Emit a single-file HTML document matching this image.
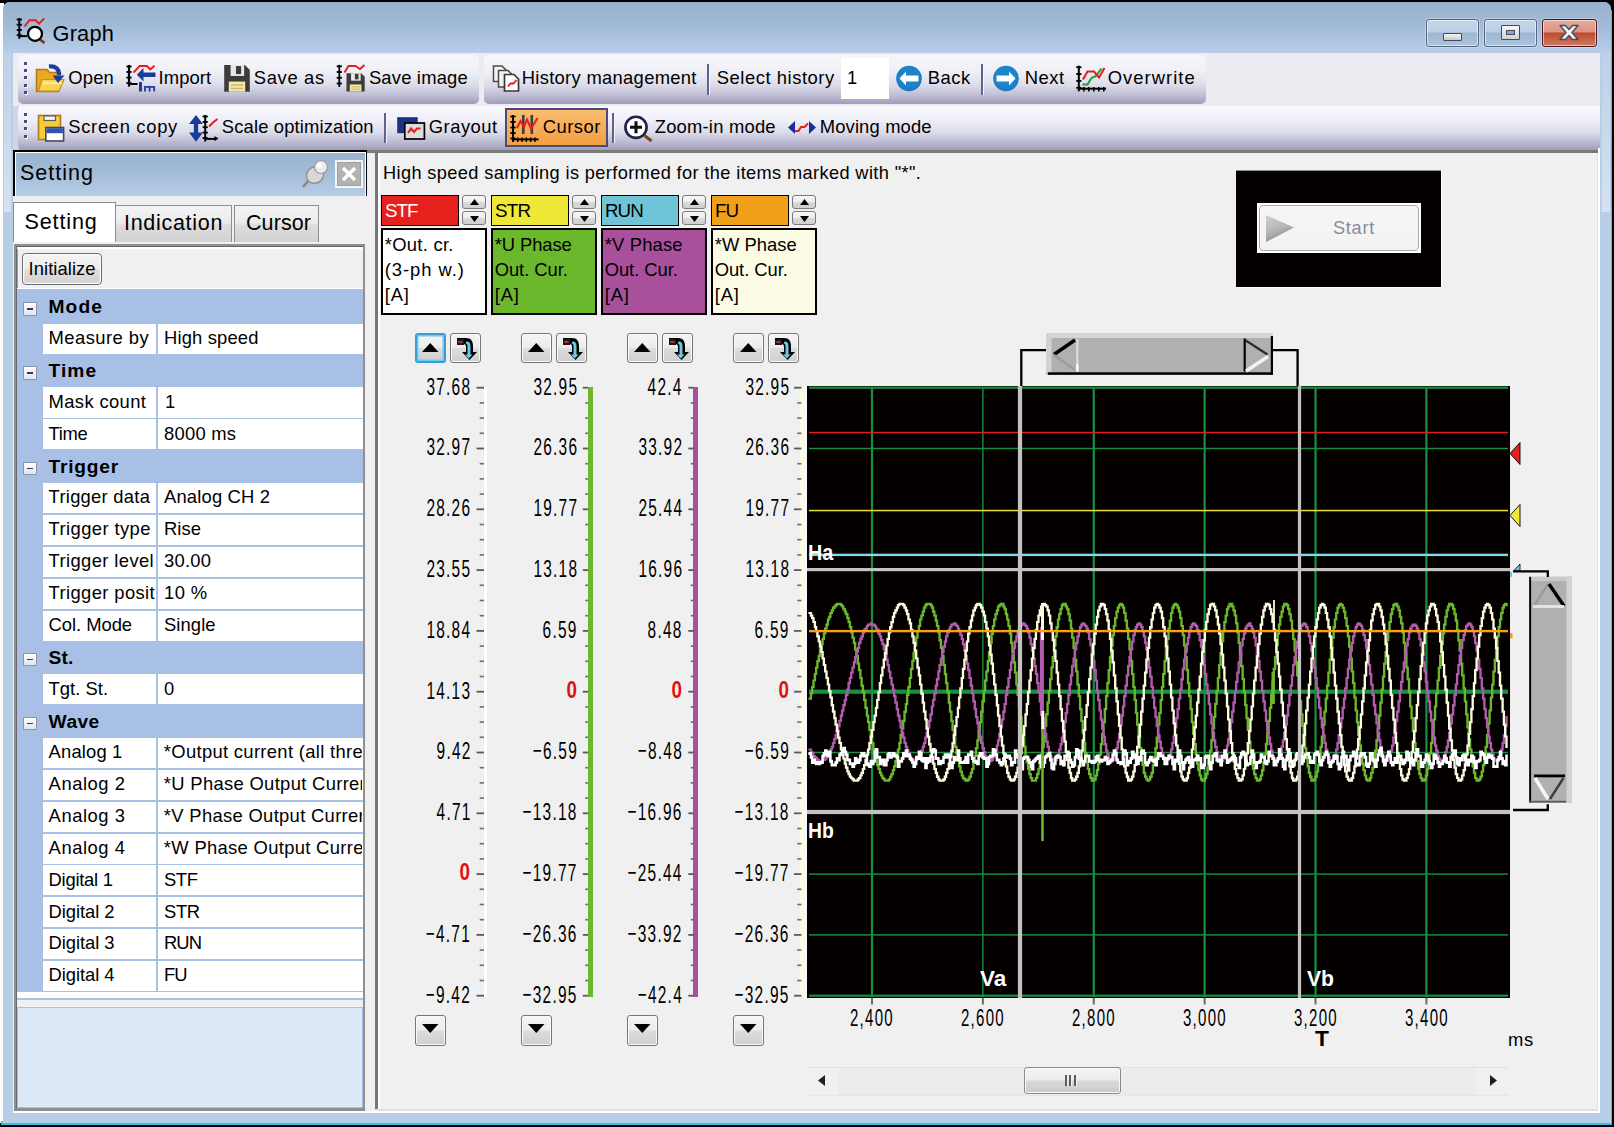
<!DOCTYPE html><html><head><meta charset="utf-8"><title>Graph</title><style>
*{box-sizing:border-box;margin:0;padding:0}
html,body{width:1614px;height:1127px;overflow:hidden;background:#000}
body{font-family:"Liberation Sans",sans-serif;color:#000;position:relative}
.a{position:absolute}
.t{position:absolute;white-space:nowrap;line-height:1}
svg{position:absolute;overflow:visible}
#win{position:absolute;left:3px;top:2px;width:1608px;height:1121px;background:#b8cde6;border-radius:7px 7px 0 0}
#title{position:absolute;left:3px;top:2px;width:1608px;height:51px;border-radius:7px 7px 0 0;background:linear-gradient(#97b1ce 0,#a1bad6 45%,#b7cee8 100%)}
.cap{position:absolute;top:19px;height:28px;border:1px solid #54667f;border-radius:3px;background:linear-gradient(#c3d4e7 0,#bccfe4 46%,#9db5d0 50%,#aec5df 100%);box-shadow:inset 0 0 0 1px rgba(255,255,255,.55),0 0 0 1px rgba(255,255,255,.3)}
.cap.x{background:linear-gradient(#e6ab9e 0,#dc9384 46%,#bd4a30 50%,#cf7a62 100%);border-color:#4a1520}
.tb{position:absolute;border-radius:5px;background:linear-gradient(#f6f6fb 0,#efeff6 35%,#dedeeb 60%,#b9b8d0 86%,#9e9cba 100%)}
.tt{position:absolute;white-space:nowrap;font-size:18.4px;line-height:20px;color:#000}
.grip{position:absolute;width:3px;height:32px;background:repeating-linear-gradient(#4b4b7a 0,#4b4b7a 3px,transparent 3px,transparent 7.200px)}
.grip.w{background:repeating-linear-gradient(#fff 0,#fff 3px,transparent 3px,transparent 7.200px)}
.sep{position:absolute;width:3px;background:linear-gradient(90deg,#62628e 0,#62628e 60%,#f4f4fa 60%)}

.tab{position:absolute;border:1.5px solid #8e8e8e;border-bottom:none;background:linear-gradient(#f3f3f3 0,#ececec 45%,#dcdcdc 55%,#d2d2d2 100%)}
.gh{position:absolute;left:17px;width:346px;background:#a9c0e6}
.gc{position:absolute;background:#fff}
.pm{position:absolute;left:23px;width:13.500px;height:13.500px;border:1px solid #8a95a8;background:linear-gradient(#fff,#dfe4ee);border-radius:1px}
.pm:after{content:"";position:absolute;left:2.500px;top:5px;width:6.500px;height:1.500px;background:#2a3a66}

.cb{position:absolute;top:195px;width:78px;height:31px;border:1.5px solid #000}
.db{position:absolute;top:228px;width:106px;height:87px;border:2px solid #000}
.sp{position:absolute;width:24px;height:14px;border:1.5px solid #7a7a7a;border-radius:3px;background:linear-gradient(#f6f6f6 0,#ededed 50%,#d8d8d8 55%,#d0d0d0 100%)}
.bt{position:absolute;width:31px;height:30px;border:1.5px solid #767676;border-radius:3px;background:linear-gradient(#f5f5f5 0,#ececec 48%,#dcdcdc 52%,#cfcfcf 100%);box-shadow:inset 0 0 0 1px #fafafa}
.bt.sel{border:2px solid #3a9cd8;box-shadow:inset 0 0 0 1.500px #6ccaf0}

.ax{position:absolute;white-space:nowrap;font-size:24.500px;line-height:1;transform-origin:100% 50%;transform:scaleX(.63);text-align:right;letter-spacing:2px}
.ax.z{transform:scaleX(.8);letter-spacing:0;font-size:23.500px;margin-right:1px}
.xl{position:absolute;white-space:nowrap;font-size:23.500px;line-height:1;transform-origin:50% 50%;transform:scaleX(.64);text-align:center;width:100px;letter-spacing:2px}
.cl{position:absolute;white-space:nowrap;font-size:18.500px;line-height:1;font-weight:bold;color:#fff;transform-origin:0 50%;transform:scaleX(.95)}
</style></head><body><div class="a" style="left:0;top:3px;width:4px;height:1120px;background:#fff"></div><div class="a" style="left:1px;top:1121px;width:1611px;height:4px;background:#3cc0dc"></div><div class="a" style="left:1609px;top:10px;width:3px;height:1114px;background:#3cc0dc"></div><div id="win"></div><div id="title"></div><div class="a" style="left:4px;top:53px;width:7px;height:159px;background:linear-gradient(rgba(255,255,255,.08),rgba(255,255,255,.42))"></div><div class="a" style="left:1601.500px;top:53px;width:8px;height:159px;background:linear-gradient(rgba(255,255,255,.08),rgba(255,255,255,.42))"></div><div class="t" style="left:52.5px;top:22.5px;font-size:21.8px;letter-spacing:0.18px;color:#000;">Graph</div><div class="cap" style="left:1426px;width:53px"></div><div class="cap" style="left:1484px;width:53px"></div><div class="cap x" style="left:1542px;width:55px"></div><div class="a" style="left:1443px;top:33px;width:19px;height:8px;background:linear-gradient(#f4f4f4,#c8c8c8);border:1.5px solid #454b5e;border-radius:1px"></div><div class="a" style="left:1501px;top:25px;width:19px;height:15px;background:linear-gradient(#f8f8f8,#d0d0d0);border:1.5px solid #454b5e;border-radius:1px"></div><div class="a" style="left:1506px;top:30px;width:9px;height:5px;background:#8aa4c4;border:1.5px solid #454b5e"></div><svg style="left:1558px;top:24px" width="22" height="17" viewBox="0 0 22 17"><path d="M2 1.5h5.5l3.5 4 3.5-4H20l-6 7 6 7h-5.500l-3.500-4-3.500 4H2l6-7z" fill="#f2f2f2" stroke="#454b5e" stroke-width="1.4" stroke-linejoin="round"/></svg><div class="a" style="left:13px;top:52.600px;width:1587px;height:53.400px;background:#ecebf1"></div><div class="a" style="left:13px;top:106px;width:1587px;height:44px;background:linear-gradient(#f8f8fc 0,#f0f0f8 30%,#dcdcea 60%,#b6b5ce 86%,#9f9dba 100%)"></div><div class="a" style="left:13px;top:150px;width:1587px;height:3px;background:#7a7a7a"></div><div class="a" style="left:13px;top:153px;width:1587px;height:960px;background:#f0f0f0"></div><div class="a" style="left:13px;top:106px;width:6px;height:44px;background:#d4d3e3"></div><div class="a" style="left:18px;top:106px;width:12px;height:44px;border-radius:5px 0 0 5px;background:linear-gradient(#f8f8fc 0,#f0f0f8 30%,#dcdcea 60%,#b6b5ce 86%,#9f9dba 100%)"></div><div class="tb" style="left:18px;top:55px;width:461px;height:49px"></div><div class="tb" style="left:484px;top:55px;width:722px;height:49px"></div><div class="tb" style="left:18px;top:106px;width:1000px;height:44px;background:none"></div><div class="grip w" style="left:25px;top:63px"></div><div class="grip w" style="left:25px;top:114.200px;height:25px"></div><div class="grip" style="left:24px;top:62px"></div><div class="grip" style="left:24px;top:113.200px;height:25px"></div><div class="t" style="left:68.2px;top:69.1px;font-size:18.4px;letter-spacing:0.22px;color:#000;">Open</div><div class="t" style="left:158.6px;top:69.1px;font-size:18.4px;letter-spacing:0.08px;color:#000;">Import</div><div class="t" style="left:253.79999999999998px;top:69.1px;font-size:18.4px;letter-spacing:0.66px;color:#000;">Save as</div><div class="t" style="left:368.9px;top:69.1px;font-size:18.4px;letter-spacing:0.19px;color:#000;">Save image</div><div class="t" style="left:521.7px;top:69.1px;font-size:18.4px;letter-spacing:0.30px;color:#000;">History management</div><div class="t" style="left:716.7px;top:69.1px;font-size:18.4px;letter-spacing:0.55px;color:#000;">Select history</div><div class="t" style="left:927.7px;top:69.1px;font-size:18.4px;letter-spacing:0.55px;color:#000;">Back</div><div class="t" style="left:1024.7px;top:69.1px;font-size:18.4px;letter-spacing:0.57px;color:#000;">Next</div><div class="t" style="left:1107.7px;top:69.1px;font-size:18.4px;letter-spacing:1.04px;color:#000;">Overwrite</div><div class="sep" style="left:706.500px;top:64px;height:31px"></div><div class="sep" style="left:981px;top:64px;height:31px"></div><div class="a" style="left:841px;top:58px;width:48px;height:41px;background:#fff"></div><div class="t" style="left:847px;top:69.1px;font-size:18.4px;letter-spacing:0.77px;color:#000;">1</div><div class="a" style="left:505px;top:108px;width:103px;height:39px;border:2px solid #4b4b7a;background:linear-gradient(#f9bd72,#f6ac56 55%,#f4a040)"></div><div class="t" style="left:68.3px;top:118px;font-size:18.4px;letter-spacing:0.67px;color:#000;">Screen copy</div><div class="t" style="left:221.79999999999998px;top:118px;font-size:18.4px;letter-spacing:0.15px;color:#000;">Scale optimization</div><div class="t" style="left:428.7px;top:118px;font-size:18.4px;letter-spacing:0.52px;color:#000;">Grayout</div><div class="t" style="left:542.7px;top:118px;font-size:18.4px;letter-spacing:0.48px;color:#000;">Cursor</div><div class="t" style="left:654.7px;top:118px;font-size:18.4px;letter-spacing:0.21px;color:#000;">Zoom-in mode</div><div class="t" style="left:819.7px;top:118px;font-size:18.4px;letter-spacing:0.15px;color:#000;">Moving mode</div><div class="sep" style="left:384px;top:113px;height:30px"></div><div class="sep" style="left:612px;top:113px;height:30px"></div><div class="a" style="left:13px;top:150px;width:354px;height:47px;background:#000"></div><div class="a" style="left:14.500px;top:151.500px;width:351.500px;height:45px;background:#fff"></div><div class="a" style="left:16px;top:153px;width:349px;height:43px;background:linear-gradient(#98b2cf 0,#a4bdd9 50%,#b6cde7 100%)"></div><div class="a" style="left:13px;top:196px;width:354px;height:2px;background:#f0f0f0"></div><div class="t" style="left:20px;top:162.5px;font-size:21.5px;letter-spacing:1.01px;color:#000;">Setting</div><div class="a" style="left:335px;top:160px;width:28px;height:28px;background:#b2b2b2;border:2px solid #f4f4f4;box-shadow:inset 0 0 0 1px #a0a0a0"></div><svg style="left:341px;top:166px" width="16" height="16" viewBox="0 0 16 16"><path d="M2 2L14 14M14 2L2 14" stroke="#fff" stroke-width="3.4"/></svg><svg style="left:301px;top:159px" width="30" height="30" viewBox="0 0 30 30"><path d="M2 28 L9 20" stroke="#888" stroke-width="2.500"/><ellipse cx="14" cy="16" rx="9" ry="8" fill="#d8d8d8" stroke="#909090" stroke-width="1.500" transform="rotate(-35 14 16)"/><circle cx="20" cy="8" r="6.500" fill="#ececec" stroke="#9a9a9a" stroke-width="1.200"/><circle cx="18.500" cy="6.500" r="2.500" fill="#fff"/></svg><div class="tab" style="left:115px;top:205px;width:117px;height:36.500px"></div><div class="tab" style="left:234px;top:205px;width:85px;height:36.500px"></div><div class="a" style="left:14px;top:244px;width:351px;height:866px;border:2px solid #909090;border-bottom:none;background:#f0f0f0;box-shadow:inset 1.600px 1.600px 0 #686868"></div><div class="a" style="left:16.500px;top:246.500px;width:346px;height:2px;background:#fff"></div><div class="tab" style="left:13.200px;top:202px;width:103px;height:39.600px;background:#fff;border-color:#868c98"></div><div class="t" style="left:24.5px;top:211px;font-size:21.6px;letter-spacing:0.84px;color:#000;">Setting</div><div class="t" style="left:124px;top:212.5px;font-size:21.5px;letter-spacing:0.70px;color:#000;">Indication</div><div class="t" style="left:246px;top:212.5px;font-size:21.5px;letter-spacing:0.08px;color:#000;">Cursor</div><div class="a" style="left:22px;top:253.100px;width:80px;height:31.700px;border:1.800px solid #6e6e6e;border-radius:4px;background:linear-gradient(#f4f4f4 0,#ececec 48%,#dedede 52%,#d2d2d2 100%);box-shadow:inset 0 0 0 1.200px #fcfcfc"></div><div class="t" style="left:28.6px;top:260.2px;font-size:18.4px;letter-spacing:0.05px;color:#000;">Initialize</div><div class="a" style="left:17px;top:287.600px;width:346px;height:1.800px;background:#fff"></div><div class="a" style="left:17px;top:289.300px;width:346px;height:1.400px;background:#7c9cd6"></div><div class="gh" style="top:288.90px;height:702.42px"></div><div class="pm" style="top:302.40px"></div><div class="t" style="left:48.6px;top:297.4px;font-size:19.2px;letter-spacing:1.04px;color:#000;font-weight:bold;">Mode</div><div class="gc" style="left:43px;top:323.76px;width:113px;height:30.06px;overflow:hidden"></div><div class="gc" style="left:158px;top:323.76px;width:204.500px;height:30.06px"></div><div class="t" style="left:48.6px;top:329.1px;font-size:18.4px;letter-spacing:0.44px;color:#000;">Measure by</div><div class="t" style="left:164.0px;top:329.1px;font-size:18.4px;letter-spacing:0.16px;color:#000;">High speed</div><div class="pm" style="top:366.12px"></div><div class="t" style="left:48.6px;top:361.1px;font-size:19.2px;letter-spacing:1.01px;color:#000;font-weight:bold;">Time</div><div class="gc" style="left:43px;top:387.48px;width:113px;height:30.06px;overflow:hidden"></div><div class="gc" style="left:158px;top:387.48px;width:204.500px;height:30.06px"></div><div class="t" style="left:48.6px;top:392.8px;font-size:18.4px;letter-spacing:0.36px;color:#000;">Mask count</div><div class="t" style="left:164.9px;top:392.8px;font-size:18.4px;letter-spacing:-0.03px;color:#000;">1</div><div class="gc" style="left:43px;top:419.34px;width:113px;height:30.06px;overflow:hidden"></div><div class="gc" style="left:158px;top:419.34px;width:204.500px;height:30.06px"></div><div class="t" style="left:48.6px;top:424.6px;font-size:18.4px;letter-spacing:-0.35px;color:#000;">Time</div><div class="t" style="left:164.0px;top:424.6px;font-size:18.4px;letter-spacing:0.25px;color:#000;">8000 ms</div><div class="pm" style="top:461.70px"></div><div class="t" style="left:48.6px;top:456.7px;font-size:19.2px;letter-spacing:0.77px;color:#000;font-weight:bold;">Trigger</div><div class="gc" style="left:43px;top:483.06px;width:113px;height:30.06px;overflow:hidden"></div><div class="gc" style="left:158px;top:483.06px;width:204.500px;height:30.06px"></div><div class="t" style="left:48.6px;top:488.4px;font-size:18.4px;letter-spacing:0.26px;color:#000;">Trigger data</div><div class="t" style="left:164.0px;top:488.4px;font-size:18.4px;letter-spacing:0.17px;color:#000;">Analog CH 2</div><div class="gc" style="left:43px;top:514.92px;width:113px;height:30.06px;overflow:hidden"></div><div class="gc" style="left:158px;top:514.92px;width:204.500px;height:30.06px"></div><div class="t" style="left:48.6px;top:520.2px;font-size:18.4px;letter-spacing:0.40px;color:#000;">Trigger type</div><div class="t" style="left:164.0px;top:520.2px;font-size:18.4px;letter-spacing:0.05px;color:#000;">Rise</div><div class="gc" style="left:43px;top:546.78px;width:113px;height:30.06px;overflow:hidden"></div><div class="gc" style="left:158px;top:546.78px;width:204.500px;height:30.06px"></div><div class="t" style="left:48.6px;top:552.1px;font-size:18.4px;letter-spacing:0.38px;color:#000;">Trigger level</div><div class="t" style="left:164.0px;top:552.1px;font-size:18.4px;letter-spacing:0.21px;color:#000;">30.00</div><div class="gc" style="left:43px;top:578.64px;width:113px;height:30.06px;overflow:hidden"></div><div class="gc" style="left:158px;top:578.64px;width:204.500px;height:30.06px"></div><div class="t" style="left:48.6px;top:583.9px;font-size:18.4px;letter-spacing:0.38px;color:#000;">Trigger posit</div><div class="t" style="left:164.0px;top:583.9px;font-size:18.4px;letter-spacing:0.42px;color:#000;">10 %</div><div class="gc" style="left:43px;top:610.50px;width:113px;height:30.06px;overflow:hidden"></div><div class="gc" style="left:158px;top:610.50px;width:204.500px;height:30.06px"></div><div class="t" style="left:48.6px;top:615.8px;font-size:18.4px;letter-spacing:-0.04px;color:#000;">Col. Mode</div><div class="t" style="left:164.0px;top:615.8px;font-size:18.4px;letter-spacing:0.08px;color:#000;">Single</div><div class="pm" style="top:652.86px"></div><div class="t" style="left:48.6px;top:647.9px;font-size:19.2px;letter-spacing:0.16px;color:#000;font-weight:bold;">St.</div><div class="gc" style="left:43px;top:674.22px;width:113px;height:30.06px;overflow:hidden"></div><div class="gc" style="left:158px;top:674.22px;width:204.500px;height:30.06px"></div><div class="t" style="left:48.6px;top:679.5px;font-size:18.4px;letter-spacing:0.02px;color:#000;">Tgt. St.</div><div class="t" style="left:164.0px;top:679.5px;font-size:18.4px;letter-spacing:0.37px;color:#000;">0</div><div class="pm" style="top:716.58px"></div><div class="t" style="left:48.6px;top:711.6px;font-size:19.2px;letter-spacing:0.39px;color:#000;font-weight:bold;">Wave</div><div class="gc" style="left:43px;top:737.94px;width:113px;height:30.06px;overflow:hidden"></div><div class="gc" style="left:158px;top:737.94px;width:204.500px;height:30.06px"></div><div class="t" style="left:48.6px;top:743.2px;font-size:18.4px;letter-spacing:0.16px;color:#000;">Analog 1</div><div class="t" style="left:163.800px;top:743.2px;width:198.400px;height:22px;overflow:hidden;font-size:18.4px;letter-spacing:.32px">*Output current (all three</div><div class="gc" style="left:43px;top:769.80px;width:113px;height:30.06px;overflow:hidden"></div><div class="gc" style="left:158px;top:769.80px;width:204.500px;height:30.06px"></div><div class="t" style="left:48.6px;top:775.1px;font-size:18.4px;letter-spacing:0.53px;color:#000;">Analog 2</div><div class="t" style="left:163.800px;top:775.1px;width:198.400px;height:22px;overflow:hidden;font-size:18.4px;letter-spacing:.32px">*U Phase Output Current</div><div class="gc" style="left:43px;top:801.66px;width:113px;height:30.06px;overflow:hidden"></div><div class="gc" style="left:158px;top:801.66px;width:204.500px;height:30.06px"></div><div class="t" style="left:48.6px;top:807.0px;font-size:18.4px;letter-spacing:0.53px;color:#000;">Analog 3</div><div class="t" style="left:163.800px;top:807.0px;width:198.400px;height:22px;overflow:hidden;font-size:18.4px;letter-spacing:.32px">*V Phase Output Current</div><div class="gc" style="left:43px;top:833.52px;width:113px;height:30.06px;overflow:hidden"></div><div class="gc" style="left:158px;top:833.52px;width:204.500px;height:30.06px"></div><div class="t" style="left:48.6px;top:838.8px;font-size:18.4px;letter-spacing:0.53px;color:#000;">Analog 4</div><div class="t" style="left:163.800px;top:838.8px;width:198.400px;height:22px;overflow:hidden;font-size:18.4px;letter-spacing:.32px">*W Phase Output Current</div><div class="gc" style="left:43px;top:865.38px;width:113px;height:30.06px;overflow:hidden"></div><div class="gc" style="left:158px;top:865.38px;width:204.500px;height:30.06px"></div><div class="t" style="left:48.6px;top:870.7px;font-size:18.4px;letter-spacing:-0.27px;color:#000;">Digital 1</div><div class="t" style="left:164.0px;top:870.7px;font-size:18.4px;letter-spacing:-0.42px;color:#000;">STF</div><div class="gc" style="left:43px;top:897.24px;width:113px;height:30.06px;overflow:hidden"></div><div class="gc" style="left:158px;top:897.24px;width:204.500px;height:30.06px"></div><div class="t" style="left:48.6px;top:902.5px;font-size:18.4px;letter-spacing:-0.07px;color:#000;">Digital 2</div><div class="t" style="left:164.0px;top:902.5px;font-size:18.4px;letter-spacing:-0.33px;color:#000;">STR</div><div class="gc" style="left:43px;top:929.10px;width:113px;height:30.06px;overflow:hidden"></div><div class="gc" style="left:158px;top:929.10px;width:204.500px;height:30.06px"></div><div class="t" style="left:48.6px;top:934.4px;font-size:18.4px;letter-spacing:-0.07px;color:#000;">Digital 3</div><div class="t" style="left:164.0px;top:934.4px;font-size:18.4px;letter-spacing:-0.95px;color:#000;">RUN</div><div class="gc" style="left:43px;top:960.96px;width:113px;height:30.06px;overflow:hidden"></div><div class="gc" style="left:158px;top:960.96px;width:204.500px;height:30.06px"></div><div class="t" style="left:48.6px;top:966.3px;font-size:18.4px;letter-spacing:-0.07px;color:#000;">Digital 4</div><div class="t" style="left:164.0px;top:966.3px;font-size:18.4px;letter-spacing:-1.00px;color:#000;">FU</div><div class="a" style="left:17px;top:990.5px;width:346px;height:1.600px;background:#a9c0e6"></div><div class="a" style="left:17px;top:992.1px;width:346px;height:5.9px;background:#fff"></div><div class="a" style="left:17px;top:998px;width:346px;height:2px;background:#a9c0e6"></div><div class="a" style="left:17px;top:1000px;width:346px;height:7px;background:#f0f0f0"></div><div class="a" style="left:17px;top:1007px;width:346px;height:101px;background:#dce8f6;border:1.5px solid #a9c0e6"></div><div class="a" style="left:14px;top:1108px;width:351px;height:2.500px;background:#8e8e8e"></div><div class="a" style="left:375px;top:153px;width:1223px;height:957px;background:#f0f0f0;border-left:3px solid #767676"></div><div class="a" style="left:378px;top:153px;width:1.500px;height:956px;background:#fff"></div><div class="a" style="left:375px;top:1108.500px;width:1223px;height:2px;background:#e2e2e2"></div><div class="a" style="left:1596.500px;top:153px;width:1.500px;height:957px;background:#e2e2e2"></div><div class="a" style="left:1598px;top:148px;width:2px;height:965px;background:#fff"></div><div class="a" style="left:367px;top:153px;width:8px;height:960px;background:#f0f0f0"></div><div class="a" style="left:13px;top:1110.500px;width:1587px;height:2.500px;background:#fff"></div><div class="t" style="left:383px;top:164.3px;font-size:18.2px;letter-spacing:0.38px;color:#000;">High speed sampling is performed for the items marked with "*".</div><div class="cb" style="left:381px;background:#e6201c"></div><div class="t" style="left:385px;top:201.6px;font-size:18.8px;letter-spacing:-1.00px;color:#fff;">STF</div><div class="sp" style="left:462px;top:195px"></div><div class="sp" style="left:462px;top:211px"></div><svg style="left:469.5px;top:198.5px" width="9" height="6"><polygon points="0,6 4.5,0 9,6" fill="#000"/></svg><svg style="left:469.5px;top:215.5px" width="9" height="6"><polygon points="0,0 9,0 4.5,6" fill="#000"/></svg><div class="db" style="left:381px;background:#fff"></div><div class="t" style="left:384.7px;top:235.6px;font-size:18.4px;letter-spacing:0.29px;color:#000;">*Out. cr.</div><div class="t" style="left:384.7px;top:260.6px;font-size:18.4px;letter-spacing:0.95px;color:#000;">(3-ph w.)</div><div class="t" style="left:384.7px;top:285.6px;font-size:18.4px;letter-spacing:0.87px;color:#000;">[A]</div><div class="bt sel" style="left:415.0px;top:333px"></div><svg style="left:421.9px;top:342.8px" width="16.5" height="9"><polygon points="0,9 8.25,0 16.5,9" fill="#000"/></svg><div class="bt" style="left:450.0px;top:333px"></div><svg style="left:453.5px;top:335px" width="24" height="26" viewBox="0 0 24 26"><path d="M3 3h9c5 0 7 3 7 8v6h4l-7.500 8-7.500-8h4v-5c0-2-.5-3-3-3H3z" fill="#000"/><path d="M12.500 6.500c3 0 4 1.500 4 5v8h2l-3.700 4-3.800-4h2.500v-8.500c0-1.500-.5-2.500-2-2.500z" fill="#6cc8e4"/><rect x="3" y="4" width="7" height="6" fill="#1a1a1a"/><rect x="4.500" y="6" width="4" height="2" fill="#e02020"/></svg><div class="bt" style="left:415.0px;top:1014.500px;height:31px"></div><svg style="left:422.0px;top:1024px" width="16.5" height="9"><polygon points="0,0 16.5,0 8.25,9" fill="#000"/></svg><div class="cb" style="left:491px;background:#f0e838"></div><div class="t" style="left:495px;top:201.6px;font-size:18.8px;letter-spacing:-0.70px;color:#000;">STR</div><div class="sp" style="left:572px;top:195px"></div><div class="sp" style="left:572px;top:211px"></div><svg style="left:579.5px;top:198.5px" width="9" height="6"><polygon points="0,6 4.5,0 9,6" fill="#000"/></svg><svg style="left:579.5px;top:215.5px" width="9" height="6"><polygon points="0,0 9,0 4.5,6" fill="#000"/></svg><div class="db" style="left:491px;background:#6cb82c"></div><div class="t" style="left:494.7px;top:235.6px;font-size:18.4px;letter-spacing:-0.08px;color:#000;">*U Phase</div><div class="t" style="left:494.7px;top:260.6px;font-size:18.4px;letter-spacing:-0.06px;color:#000;">Out. Cur.</div><div class="t" style="left:494.7px;top:285.6px;font-size:18.4px;letter-spacing:0.87px;color:#000;">[A]</div><div class="bt" style="left:521.0px;top:333px"></div><svg style="left:527.9px;top:342.8px" width="16.5" height="9"><polygon points="0,9 8.25,0 16.5,9" fill="#000"/></svg><div class="bt" style="left:556.0px;top:333px"></div><svg style="left:559.5px;top:335px" width="24" height="26" viewBox="0 0 24 26"><path d="M3 3h9c5 0 7 3 7 8v6h4l-7.500 8-7.500-8h4v-5c0-2-.5-3-3-3H3z" fill="#000"/><path d="M12.500 6.500c3 0 4 1.500 4 5v8h2l-3.700 4-3.800-4h2.500v-8.500c0-1.500-.5-2.500-2-2.500z" fill="#6cc8e4"/><rect x="3" y="4" width="7" height="6" fill="#1a1a1a"/><rect x="4.500" y="6" width="4" height="2" fill="#e02020"/></svg><div class="bt" style="left:521.0px;top:1014.500px;height:31px"></div><svg style="left:528.0px;top:1024px" width="16.5" height="9"><polygon points="0,0 16.5,0 8.25,9" fill="#000"/></svg><div class="cb" style="left:601px;background:#70c4d8"></div><div class="t" style="left:605px;top:201.6px;font-size:18.8px;letter-spacing:-1.00px;color:#000;">RUN</div><div class="sp" style="left:682px;top:195px"></div><div class="sp" style="left:682px;top:211px"></div><svg style="left:689.5px;top:198.5px" width="9" height="6"><polygon points="0,6 4.5,0 9,6" fill="#000"/></svg><svg style="left:689.5px;top:215.5px" width="9" height="6"><polygon points="0,0 9,0 4.5,6" fill="#000"/></svg><div class="db" style="left:601px;background:#a8509c"></div><div class="t" style="left:604.7px;top:235.6px;font-size:18.4px;letter-spacing:0.17px;color:#000;">*V Phase</div><div class="t" style="left:604.7px;top:260.6px;font-size:18.4px;letter-spacing:-0.06px;color:#000;">Out. Cur.</div><div class="t" style="left:604.7px;top:285.6px;font-size:18.4px;letter-spacing:0.87px;color:#000;">[A]</div><div class="bt" style="left:627.0px;top:333px"></div><svg style="left:633.9px;top:342.8px" width="16.5" height="9"><polygon points="0,9 8.25,0 16.5,9" fill="#000"/></svg><div class="bt" style="left:662.0px;top:333px"></div><svg style="left:665.5px;top:335px" width="24" height="26" viewBox="0 0 24 26"><path d="M3 3h9c5 0 7 3 7 8v6h4l-7.500 8-7.500-8h4v-5c0-2-.5-3-3-3H3z" fill="#000"/><path d="M12.500 6.500c3 0 4 1.500 4 5v8h2l-3.700 4-3.800-4h2.500v-8.500c0-1.500-.5-2.500-2-2.500z" fill="#6cc8e4"/><rect x="3" y="4" width="7" height="6" fill="#1a1a1a"/><rect x="4.500" y="6" width="4" height="2" fill="#e02020"/></svg><div class="bt" style="left:627.0px;top:1014.500px;height:31px"></div><svg style="left:634.0px;top:1024px" width="16.5" height="9"><polygon points="0,0 16.5,0 8.25,9" fill="#000"/></svg><div class="cb" style="left:711px;background:#f0a018"></div><div class="t" style="left:715px;top:201.6px;font-size:18.8px;letter-spacing:-1.00px;color:#000;">FU</div><div class="sp" style="left:792px;top:195px"></div><div class="sp" style="left:792px;top:211px"></div><svg style="left:799.5px;top:198.5px" width="9" height="6"><polygon points="0,6 4.5,0 9,6" fill="#000"/></svg><svg style="left:799.5px;top:215.5px" width="9" height="6"><polygon points="0,0 9,0 4.5,6" fill="#000"/></svg><div class="db" style="left:711px;background:#fcfce4"></div><div class="t" style="left:714.7px;top:235.6px;font-size:18.4px;letter-spacing:0.04px;color:#000;">*W Phase</div><div class="t" style="left:714.7px;top:260.6px;font-size:18.4px;letter-spacing:-0.06px;color:#000;">Out. Cur.</div><div class="t" style="left:714.7px;top:285.6px;font-size:18.4px;letter-spacing:0.87px;color:#000;">[A]</div><div class="bt" style="left:733.0px;top:333px"></div><svg style="left:739.9px;top:342.8px" width="16.5" height="9"><polygon points="0,9 8.25,0 16.5,9" fill="#000"/></svg><div class="bt" style="left:768.0px;top:333px"></div><svg style="left:771.5px;top:335px" width="24" height="26" viewBox="0 0 24 26"><path d="M3 3h9c5 0 7 3 7 8v6h4l-7.500 8-7.500-8h4v-5c0-2-.5-3-3-3H3z" fill="#000"/><path d="M12.500 6.500c3 0 4 1.500 4 5v8h2l-3.700 4-3.800-4h2.500v-8.500c0-1.500-.5-2.500-2-2.500z" fill="#6cc8e4"/><rect x="3" y="4" width="7" height="6" fill="#1a1a1a"/><rect x="4.500" y="6" width="4" height="2" fill="#e02020"/></svg><div class="bt" style="left:733.0px;top:1014.500px;height:31px"></div><svg style="left:740.0px;top:1024px" width="16.5" height="9"><polygon points="0,0 16.5,0 8.25,9" fill="#000"/></svg><div class="a" style="left:1236.400px;top:170.300px;width:204.500px;height:116.500px;background:#040000;border-top:1.500px solid #8c8c8c;box-shadow:1px 1px 0 #fff"></div><div class="a" style="left:1257px;top:202.800px;width:164px;height:50.100px;background:#fff"></div><div class="a" style="left:1259px;top:204.800px;width:160px;height:46.100px;border:1.500px solid #a4aab2;border-radius:4px;background:linear-gradient(#f6f6f6,#f2f2f2)"></div><svg style="left:1266px;top:214.900px" width="29" height="28"><defs><linearGradient id="pg" x1="0" y1="0" x2=".4" y2="1"><stop offset="0" stop-color="#d2d2d2"/><stop offset=".6" stop-color="#b4b4b4"/><stop offset="1" stop-color="#8a8a8a"/></linearGradient></defs><polygon points="0,0 28,12.500 0,27" fill="url(#pg)"/></svg><div class="t" style="left:1333px;top:219px;font-size:18.2px;letter-spacing:0.71px;color:#8a8a98;">Start</div><div class="a" style="left:484px;top:387px;width:2.500px;height:610px;background:#fff"></div><div class="a" style="left:587.600px;top:387px;width:5px;height:610px;background:#6cb82c"></div><div class="a" style="left:693.300px;top:387px;width:5px;height:610px;background:#a8509c"></div><div class="a" style="left:800px;top:387px;width:4px;height:610px;background:#fcfce4"></div><div class="a" style="left:804px;top:386px;width:3px;height:612px;background:#f8f8f8"></div><svg style="left:0;top:0" width="1614" height="1127"><rect x="476.5" y="386.80" width="7.5" height="1.800" fill="#5a5a5a"/><rect x="479.7" y="402.10" width="4.3" height="1.600" fill="#6e6e6e"/><rect x="479.7" y="417.30" width="4.3" height="1.600" fill="#6e6e6e"/><rect x="479.7" y="432.50" width="4.3" height="1.600" fill="#6e6e6e"/><rect x="476.5" y="447.60" width="7.5" height="1.800" fill="#5a5a5a"/><rect x="479.7" y="462.90" width="4.3" height="1.600" fill="#6e6e6e"/><rect x="479.7" y="478.10" width="4.3" height="1.600" fill="#6e6e6e"/><rect x="479.7" y="493.30" width="4.3" height="1.600" fill="#6e6e6e"/><rect x="476.5" y="508.40" width="7.5" height="1.800" fill="#5a5a5a"/><rect x="479.7" y="523.70" width="4.3" height="1.600" fill="#6e6e6e"/><rect x="479.7" y="538.90" width="4.3" height="1.600" fill="#6e6e6e"/><rect x="479.7" y="554.10" width="4.3" height="1.600" fill="#6e6e6e"/><rect x="476.5" y="569.20" width="7.5" height="1.800" fill="#5a5a5a"/><rect x="479.7" y="584.50" width="4.3" height="1.600" fill="#6e6e6e"/><rect x="479.7" y="599.70" width="4.3" height="1.600" fill="#6e6e6e"/><rect x="479.7" y="614.90" width="4.3" height="1.600" fill="#6e6e6e"/><rect x="476.5" y="630.00" width="7.5" height="1.800" fill="#5a5a5a"/><rect x="479.7" y="645.30" width="4.3" height="1.600" fill="#6e6e6e"/><rect x="479.7" y="660.50" width="4.3" height="1.600" fill="#6e6e6e"/><rect x="479.7" y="675.70" width="4.3" height="1.600" fill="#6e6e6e"/><rect x="476.5" y="690.80" width="7.5" height="1.800" fill="#5a5a5a"/><rect x="479.7" y="706.10" width="4.3" height="1.600" fill="#6e6e6e"/><rect x="479.7" y="721.30" width="4.3" height="1.600" fill="#6e6e6e"/><rect x="479.7" y="736.50" width="4.3" height="1.600" fill="#6e6e6e"/><rect x="476.5" y="751.60" width="7.5" height="1.800" fill="#5a5a5a"/><rect x="479.7" y="766.90" width="4.3" height="1.600" fill="#6e6e6e"/><rect x="479.7" y="782.10" width="4.3" height="1.600" fill="#6e6e6e"/><rect x="479.7" y="797.30" width="4.3" height="1.600" fill="#6e6e6e"/><rect x="476.5" y="812.40" width="7.5" height="1.800" fill="#5a5a5a"/><rect x="479.7" y="827.70" width="4.3" height="1.600" fill="#6e6e6e"/><rect x="479.7" y="842.90" width="4.3" height="1.600" fill="#6e6e6e"/><rect x="479.7" y="858.10" width="4.3" height="1.600" fill="#6e6e6e"/><rect x="476.5" y="873.20" width="7.5" height="1.800" fill="#5a5a5a"/><rect x="479.7" y="888.50" width="4.3" height="1.600" fill="#6e6e6e"/><rect x="479.7" y="903.70" width="4.3" height="1.600" fill="#6e6e6e"/><rect x="479.7" y="918.90" width="4.3" height="1.600" fill="#6e6e6e"/><rect x="476.5" y="934.00" width="7.5" height="1.800" fill="#5a5a5a"/><rect x="479.7" y="949.30" width="4.3" height="1.600" fill="#6e6e6e"/><rect x="479.7" y="964.50" width="4.3" height="1.600" fill="#6e6e6e"/><rect x="479.7" y="979.70" width="4.3" height="1.600" fill="#6e6e6e"/><rect x="476.5" y="994.80" width="7.5" height="1.800" fill="#5a5a5a"/><rect x="582.8" y="386.80" width="5.2" height="1.800" fill="#5a5a5a"/><rect x="585.2" y="402.10" width="2.8" height="1.600" fill="#6e6e6e"/><rect x="585.2" y="417.30" width="2.8" height="1.600" fill="#6e6e6e"/><rect x="585.2" y="432.50" width="2.8" height="1.600" fill="#6e6e6e"/><rect x="582.8" y="447.60" width="5.2" height="1.800" fill="#5a5a5a"/><rect x="585.2" y="462.90" width="2.8" height="1.600" fill="#6e6e6e"/><rect x="585.2" y="478.10" width="2.8" height="1.600" fill="#6e6e6e"/><rect x="585.2" y="493.30" width="2.8" height="1.600" fill="#6e6e6e"/><rect x="582.8" y="508.40" width="5.2" height="1.800" fill="#5a5a5a"/><rect x="585.2" y="523.70" width="2.8" height="1.600" fill="#6e6e6e"/><rect x="585.2" y="538.90" width="2.8" height="1.600" fill="#6e6e6e"/><rect x="585.2" y="554.10" width="2.8" height="1.600" fill="#6e6e6e"/><rect x="582.8" y="569.20" width="5.2" height="1.800" fill="#5a5a5a"/><rect x="585.2" y="584.50" width="2.8" height="1.600" fill="#6e6e6e"/><rect x="585.2" y="599.70" width="2.8" height="1.600" fill="#6e6e6e"/><rect x="585.2" y="614.90" width="2.8" height="1.600" fill="#6e6e6e"/><rect x="582.8" y="630.00" width="5.2" height="1.800" fill="#5a5a5a"/><rect x="585.2" y="645.30" width="2.8" height="1.600" fill="#6e6e6e"/><rect x="585.2" y="660.50" width="2.8" height="1.600" fill="#6e6e6e"/><rect x="585.2" y="675.70" width="2.8" height="1.600" fill="#6e6e6e"/><rect x="582.8" y="690.80" width="5.2" height="1.800" fill="#5a5a5a"/><rect x="585.2" y="706.10" width="2.8" height="1.600" fill="#6e6e6e"/><rect x="585.2" y="721.30" width="2.8" height="1.600" fill="#6e6e6e"/><rect x="585.2" y="736.50" width="2.8" height="1.600" fill="#6e6e6e"/><rect x="582.8" y="751.60" width="5.2" height="1.800" fill="#5a5a5a"/><rect x="585.2" y="766.90" width="2.8" height="1.600" fill="#6e6e6e"/><rect x="585.2" y="782.10" width="2.8" height="1.600" fill="#6e6e6e"/><rect x="585.2" y="797.30" width="2.8" height="1.600" fill="#6e6e6e"/><rect x="582.8" y="812.40" width="5.2" height="1.800" fill="#5a5a5a"/><rect x="585.2" y="827.70" width="2.8" height="1.600" fill="#6e6e6e"/><rect x="585.2" y="842.90" width="2.8" height="1.600" fill="#6e6e6e"/><rect x="585.2" y="858.10" width="2.8" height="1.600" fill="#6e6e6e"/><rect x="582.8" y="873.20" width="5.2" height="1.800" fill="#5a5a5a"/><rect x="585.2" y="888.50" width="2.8" height="1.600" fill="#6e6e6e"/><rect x="585.2" y="903.70" width="2.8" height="1.600" fill="#6e6e6e"/><rect x="585.2" y="918.90" width="2.8" height="1.600" fill="#6e6e6e"/><rect x="582.8" y="934.00" width="5.2" height="1.800" fill="#5a5a5a"/><rect x="585.2" y="949.30" width="2.8" height="1.600" fill="#6e6e6e"/><rect x="585.2" y="964.50" width="2.8" height="1.600" fill="#6e6e6e"/><rect x="585.2" y="979.70" width="2.8" height="1.600" fill="#6e6e6e"/><rect x="582.8" y="994.80" width="5.2" height="1.800" fill="#5a5a5a"/><rect x="688.3" y="386.80" width="5.2" height="1.800" fill="#5a5a5a"/><rect x="690.7" y="402.10" width="2.8" height="1.600" fill="#6e6e6e"/><rect x="690.7" y="417.30" width="2.8" height="1.600" fill="#6e6e6e"/><rect x="690.7" y="432.50" width="2.8" height="1.600" fill="#6e6e6e"/><rect x="688.3" y="447.60" width="5.2" height="1.800" fill="#5a5a5a"/><rect x="690.7" y="462.90" width="2.8" height="1.600" fill="#6e6e6e"/><rect x="690.7" y="478.10" width="2.8" height="1.600" fill="#6e6e6e"/><rect x="690.7" y="493.30" width="2.8" height="1.600" fill="#6e6e6e"/><rect x="688.3" y="508.40" width="5.2" height="1.800" fill="#5a5a5a"/><rect x="690.7" y="523.70" width="2.8" height="1.600" fill="#6e6e6e"/><rect x="690.7" y="538.90" width="2.8" height="1.600" fill="#6e6e6e"/><rect x="690.7" y="554.10" width="2.8" height="1.600" fill="#6e6e6e"/><rect x="688.3" y="569.20" width="5.2" height="1.800" fill="#5a5a5a"/><rect x="690.7" y="584.50" width="2.8" height="1.600" fill="#6e6e6e"/><rect x="690.7" y="599.70" width="2.8" height="1.600" fill="#6e6e6e"/><rect x="690.7" y="614.90" width="2.8" height="1.600" fill="#6e6e6e"/><rect x="688.3" y="630.00" width="5.2" height="1.800" fill="#5a5a5a"/><rect x="690.7" y="645.30" width="2.8" height="1.600" fill="#6e6e6e"/><rect x="690.7" y="660.50" width="2.8" height="1.600" fill="#6e6e6e"/><rect x="690.7" y="675.70" width="2.8" height="1.600" fill="#6e6e6e"/><rect x="688.3" y="690.80" width="5.2" height="1.800" fill="#5a5a5a"/><rect x="690.7" y="706.10" width="2.8" height="1.600" fill="#6e6e6e"/><rect x="690.7" y="721.30" width="2.8" height="1.600" fill="#6e6e6e"/><rect x="690.7" y="736.50" width="2.8" height="1.600" fill="#6e6e6e"/><rect x="688.3" y="751.60" width="5.2" height="1.800" fill="#5a5a5a"/><rect x="690.7" y="766.90" width="2.8" height="1.600" fill="#6e6e6e"/><rect x="690.7" y="782.10" width="2.8" height="1.600" fill="#6e6e6e"/><rect x="690.7" y="797.30" width="2.8" height="1.600" fill="#6e6e6e"/><rect x="688.3" y="812.40" width="5.2" height="1.800" fill="#5a5a5a"/><rect x="690.7" y="827.70" width="2.8" height="1.600" fill="#6e6e6e"/><rect x="690.7" y="842.90" width="2.8" height="1.600" fill="#6e6e6e"/><rect x="690.7" y="858.10" width="2.8" height="1.600" fill="#6e6e6e"/><rect x="688.3" y="873.20" width="5.2" height="1.800" fill="#5a5a5a"/><rect x="690.7" y="888.50" width="2.8" height="1.600" fill="#6e6e6e"/><rect x="690.7" y="903.70" width="2.8" height="1.600" fill="#6e6e6e"/><rect x="690.7" y="918.90" width="2.8" height="1.600" fill="#6e6e6e"/><rect x="688.3" y="934.00" width="5.2" height="1.800" fill="#5a5a5a"/><rect x="690.7" y="949.30" width="2.8" height="1.600" fill="#6e6e6e"/><rect x="690.7" y="964.50" width="2.8" height="1.600" fill="#6e6e6e"/><rect x="690.7" y="979.70" width="2.8" height="1.600" fill="#6e6e6e"/><rect x="688.3" y="994.80" width="5.2" height="1.800" fill="#5a5a5a"/><rect x="794.0" y="386.80" width="7.5" height="1.800" fill="#5a5a5a"/><rect x="797.2" y="402.10" width="4.3" height="1.600" fill="#6e6e6e"/><rect x="797.2" y="417.30" width="4.3" height="1.600" fill="#6e6e6e"/><rect x="797.2" y="432.50" width="4.3" height="1.600" fill="#6e6e6e"/><rect x="794.0" y="447.60" width="7.5" height="1.800" fill="#5a5a5a"/><rect x="797.2" y="462.90" width="4.3" height="1.600" fill="#6e6e6e"/><rect x="797.2" y="478.10" width="4.3" height="1.600" fill="#6e6e6e"/><rect x="797.2" y="493.30" width="4.3" height="1.600" fill="#6e6e6e"/><rect x="794.0" y="508.40" width="7.5" height="1.800" fill="#5a5a5a"/><rect x="797.2" y="523.70" width="4.3" height="1.600" fill="#6e6e6e"/><rect x="797.2" y="538.90" width="4.3" height="1.600" fill="#6e6e6e"/><rect x="797.2" y="554.10" width="4.3" height="1.600" fill="#6e6e6e"/><rect x="794.0" y="569.20" width="7.5" height="1.800" fill="#5a5a5a"/><rect x="797.2" y="584.50" width="4.3" height="1.600" fill="#6e6e6e"/><rect x="797.2" y="599.70" width="4.3" height="1.600" fill="#6e6e6e"/><rect x="797.2" y="614.90" width="4.3" height="1.600" fill="#6e6e6e"/><rect x="794.0" y="630.00" width="7.5" height="1.800" fill="#5a5a5a"/><rect x="797.2" y="645.30" width="4.3" height="1.600" fill="#6e6e6e"/><rect x="797.2" y="660.50" width="4.3" height="1.600" fill="#6e6e6e"/><rect x="797.2" y="675.70" width="4.3" height="1.600" fill="#6e6e6e"/><rect x="794.0" y="690.80" width="7.5" height="1.800" fill="#5a5a5a"/><rect x="797.2" y="706.10" width="4.3" height="1.600" fill="#6e6e6e"/><rect x="797.2" y="721.30" width="4.3" height="1.600" fill="#6e6e6e"/><rect x="797.2" y="736.50" width="4.3" height="1.600" fill="#6e6e6e"/><rect x="794.0" y="751.60" width="7.5" height="1.800" fill="#5a5a5a"/><rect x="797.2" y="766.90" width="4.3" height="1.600" fill="#6e6e6e"/><rect x="797.2" y="782.10" width="4.3" height="1.600" fill="#6e6e6e"/><rect x="797.2" y="797.30" width="4.3" height="1.600" fill="#6e6e6e"/><rect x="794.0" y="812.40" width="7.5" height="1.800" fill="#5a5a5a"/><rect x="797.2" y="827.70" width="4.3" height="1.600" fill="#6e6e6e"/><rect x="797.2" y="842.90" width="4.3" height="1.600" fill="#6e6e6e"/><rect x="797.2" y="858.10" width="4.3" height="1.600" fill="#6e6e6e"/><rect x="794.0" y="873.20" width="7.5" height="1.800" fill="#5a5a5a"/><rect x="797.2" y="888.50" width="4.3" height="1.600" fill="#6e6e6e"/><rect x="797.2" y="903.70" width="4.3" height="1.600" fill="#6e6e6e"/><rect x="797.2" y="918.90" width="4.3" height="1.600" fill="#6e6e6e"/><rect x="794.0" y="934.00" width="7.5" height="1.800" fill="#5a5a5a"/><rect x="797.2" y="949.30" width="4.3" height="1.600" fill="#6e6e6e"/><rect x="797.2" y="964.50" width="4.3" height="1.600" fill="#6e6e6e"/><rect x="797.2" y="979.70" width="4.3" height="1.600" fill="#6e6e6e"/><rect x="794.0" y="994.80" width="7.5" height="1.800" fill="#5a5a5a"/></svg><div class="ax" style="right:1142.6px;top:374.5px;color:#000;">37.68</div><div class="ax" style="right:1142.6px;top:435.3px;color:#000;">32.97</div><div class="ax" style="right:1142.6px;top:496.1px;color:#000;">28.26</div><div class="ax" style="right:1142.6px;top:556.9px;color:#000;">23.55</div><div class="ax" style="right:1142.6px;top:617.7px;color:#000;">18.84</div><div class="ax" style="right:1142.6px;top:678.5px;color:#000;">14.13</div><div class="ax" style="right:1142.6px;top:739.3px;color:#000;">9.42</div><div class="ax" style="right:1142.6px;top:800.1px;color:#000;">4.71</div><div class="ax z" style="right:1142.6px;top:860.9px;color:#e01010;font-weight:bold;">0</div><div class="ax" style="right:1142.6px;top:921.7px;color:#000;">−4.71</div><div class="ax" style="right:1142.6px;top:982.5px;color:#000;">−9.42</div><div class="ax" style="right:1036px;top:374.5px;color:#000;">32.95</div><div class="ax" style="right:1036px;top:435.3px;color:#000;">26.36</div><div class="ax" style="right:1036px;top:496.1px;color:#000;">19.77</div><div class="ax" style="right:1036px;top:556.9px;color:#000;">13.18</div><div class="ax" style="right:1036px;top:617.7px;color:#000;">6.59</div><div class="ax z" style="right:1036px;top:678.5px;color:#e01010;font-weight:bold;">0</div><div class="ax" style="right:1036px;top:739.3px;color:#000;">−6.59</div><div class="ax" style="right:1036px;top:800.1px;color:#000;">−13.18</div><div class="ax" style="right:1036px;top:860.9px;color:#000;">−19.77</div><div class="ax" style="right:1036px;top:921.7px;color:#000;">−26.36</div><div class="ax" style="right:1036px;top:982.5px;color:#000;">−32.95</div><div class="ax" style="right:931.2px;top:374.5px;color:#000;">42.4</div><div class="ax" style="right:931.2px;top:435.3px;color:#000;">33.92</div><div class="ax" style="right:931.2px;top:496.1px;color:#000;">25.44</div><div class="ax" style="right:931.2px;top:556.9px;color:#000;">16.96</div><div class="ax" style="right:931.2px;top:617.7px;color:#000;">8.48</div><div class="ax z" style="right:931.2px;top:678.5px;color:#e01010;font-weight:bold;">0</div><div class="ax" style="right:931.2px;top:739.3px;color:#000;">−8.48</div><div class="ax" style="right:931.2px;top:800.1px;color:#000;">−16.96</div><div class="ax" style="right:931.2px;top:860.9px;color:#000;">−25.44</div><div class="ax" style="right:931.2px;top:921.7px;color:#000;">−33.92</div><div class="ax" style="right:931.2px;top:982.5px;color:#000;">−42.4</div><div class="ax" style="right:824.2px;top:374.5px;color:#000;">32.95</div><div class="ax" style="right:824.2px;top:435.3px;color:#000;">26.36</div><div class="ax" style="right:824.2px;top:496.1px;color:#000;">19.77</div><div class="ax" style="right:824.2px;top:556.9px;color:#000;">13.18</div><div class="ax" style="right:824.2px;top:617.7px;color:#000;">6.59</div><div class="ax z" style="right:824.2px;top:678.5px;color:#e01010;font-weight:bold;">0</div><div class="ax" style="right:824.2px;top:739.3px;color:#000;">−6.59</div><div class="ax" style="right:824.2px;top:800.1px;color:#000;">−13.18</div><div class="ax" style="right:824.2px;top:860.9px;color:#000;">−19.77</div><div class="ax" style="right:824.2px;top:921.7px;color:#000;">−26.36</div><div class="ax" style="right:824.2px;top:982.5px;color:#000;">−32.95</div><div class="a" style="left:807px;top:386px;width:703px;height:612px;background:#040000"></div><svg style="left:0;top:0" width="1614" height="1127"><rect x="809" y="386.60" width="699" height="2.2" fill="#179040"/><rect x="809" y="447.77" width="699" height="1.45" fill="#179040"/><rect x="809" y="569.37" width="699" height="1.45" fill="#179040"/><rect x="809" y="630.17" width="699" height="1.45" fill="#179040"/><rect x="809" y="689.60" width="699" height="4.2" fill="#179040"/><rect x="809" y="751.77" width="699" height="1.45" fill="#179040"/><rect x="809" y="812.57" width="699" height="1.45" fill="#179040"/><rect x="809" y="873.37" width="699" height="1.45" fill="#179040"/><rect x="809" y="934.17" width="699" height="1.45" fill="#179040"/><rect x="809" y="994.60" width="699" height="2.2" fill="#179040"/><rect x="870.90" y="387" width="2.2" height="610" fill="#179040"/><rect x="982.18" y="387" width="1.4" height="610" fill="#179040"/><rect x="1092.66" y="387" width="2.2" height="610" fill="#179040"/><rect x="1203.54" y="387" width="2.2" height="610" fill="#179040"/><rect x="1314.42" y="387" width="2.2" height="610" fill="#179040"/><rect x="1425.30" y="387" width="2.2" height="610" fill="#179040"/><path d="M809.6 697.6v2.2M810.9 692.4v7.4M812.2 685.9v8.7M813.5 679.4v8.7M814.9 672.9v8.7M816.1 666.4v8.7M817.4 659.9v8.7M818.8 654.8v7.4M820.0 648.2v8.7M821.4 643.0v7.4M822.6 637.9v7.4M823.9 632.6v7.4M825.2 627.4v7.4M826.5 623.5v6.1M827.9 618.4v7.4M829.1 615.8v4.8M830.4 611.9v6.1M831.8 609.2v4.8M833.0 606.6v4.8M834.4 605.4v3.5M835.6 604.0v3.5M836.9 602.8v3.5M838.2 602.8v2.2M839.5 602.8v2.2M840.9 602.8v3.5M842.1 604.0v3.5M843.4 605.4v4.8M844.8 607.9v4.8M846.0 610.5v4.8M847.4 613.1v6.1M848.6 617.0v6.1M849.9 620.9v7.4M851.2 626.1v7.4M852.5 631.4v7.4M853.9 636.5v7.4M855.1 641.8v8.7M856.4 648.2v8.7M857.8 654.8v10.0M859.0 662.5v8.7M860.4 669.0v10.0M861.6 676.9v10.0M862.9 684.6v8.7M864.2 691.1v10.0M865.5 698.9v10.0M866.9 706.8v10.0M868.1 714.5v8.7M869.4 721.0v10.0M870.8 728.9v8.7M872.0 735.4v8.7M873.4 741.9v8.7M874.6 748.4v7.4M875.9 753.5v7.4M877.2 758.8v7.4M878.5 763.9v6.1M879.9 767.9v6.1M881.1 771.8v4.8M882.4 774.4v4.8M883.8 776.9v3.5M885.0 778.2v3.5M886.4 779.5v2.2M887.6 779.5v2.2M888.9 778.2v3.5M890.2 775.6v4.8M891.5 773.0v4.8M892.9 769.1v6.1M894.1 765.2v6.1M895.4 760.0v7.4M896.8 754.9v7.4M898.0 748.4v8.7M899.4 741.9v8.7M900.6 734.0v10.0M901.9 727.5v8.7M903.2 719.8v10.0M904.5 710.6v11.3M905.9 702.9v10.0M907.1 693.8v11.3M908.4 685.9v10.0M909.8 676.9v11.3M911.0 667.8v11.3M912.4 659.9v10.0M913.6 652.1v10.0M914.9 644.4v10.0M916.2 636.5v10.0M917.5 630.0v8.7M918.9 624.9v7.4M920.1 618.4v8.7M921.4 614.4v6.1M922.8 610.5v6.1M924.0 606.6v6.1M925.4 604.0v4.8M926.6 602.8v3.5M927.9 602.8v2.2M929.2 602.8v2.2M930.5 602.8v3.5M931.9 604.0v4.8M933.1 606.6v6.1M934.4 610.5v6.1M935.8 614.4v7.4M937.0 619.6v7.4M938.4 624.9v8.7M939.6 631.4v10.0M940.9 639.1v10.0M942.2 646.9v10.0M943.5 654.8v11.3M944.9 663.9v11.3M946.1 672.9v11.3M947.4 682.0v11.3M948.8 691.1v12.6M950.0 701.5v11.3M951.4 710.6v11.3M952.6 719.8v11.3M953.9 728.9v10.0M955.2 736.6v11.3M956.5 745.8v8.7M957.9 752.2v8.7M959.1 758.8v8.7M960.4 765.2v7.4M961.8 770.4v6.1M963.0 774.4v4.8M964.4 776.9v3.5M965.6 778.2v3.5M966.9 779.5v2.2M968.2 778.2v3.5M969.5 775.6v4.8M970.9 771.8v6.1M972.1 767.9v6.1M973.4 761.4v8.7M974.8 754.9v8.7M976.0 747.0v10.0M977.4 739.2v10.0M978.6 730.1v11.3M979.9 721.0v11.3M981.2 710.6v12.6M982.5 700.2v12.6M983.9 689.9v12.6M985.1 679.4v12.6M986.4 670.4v11.3M987.8 659.9v12.6M989.0 650.9v11.3M990.4 641.8v11.3M991.6 632.6v11.3M992.9 624.9v10.0M994.2 618.4v8.7M995.5 613.1v7.4M996.9 609.2v6.1M998.1 605.4v6.1M999.4 604.0v3.5M1000.8 602.8v3.5M1002.0 602.8v2.2M1003.4 602.8v4.8M1004.6 605.4v4.8M1005.9 607.9v7.4M1007.2 613.1v7.4M1008.5 618.4v8.7M1009.9 624.9v10.0M1011.1 632.6v11.3M1012.4 641.8v11.3M1013.8 650.9v12.6M1015.0 661.2v12.6M1016.4 671.6v13.9M1017.6 683.4v12.6M1018.9 693.8v13.9M1020.2 705.4v12.6M1021.5 715.9v12.6M1022.9 726.2v12.6M1024.2 736.6v11.3M1025.5 745.8v11.3M1026.8 754.9v8.7M1028.1 761.4v8.7M1029.4 767.9v7.4M1030.7 773.0v6.1M1032.0 776.9v4.8M1033.2 779.5v2.2M1034.6 779.5v2.2M1035.9 776.9v4.8M1037.2 773.0v6.1M1038.5 767.9v7.4M1039.8 761.4v8.7M1041.1 753.5v10.0M1042.4 745.8v10.0M1043.7 735.4v12.6M1045.0 724.9v12.6M1046.2 713.2v13.9M1047.6 701.5v13.9M1048.9 689.9v13.9M1050.2 678.1v13.9M1051.5 666.4v13.9M1052.8 656.0v12.6M1054.1 644.4v13.9M1055.4 635.2v11.3M1056.7 626.1v11.3M1058.0 618.4v10.0M1059.2 613.1v7.4M1060.6 607.9v7.4M1061.9 604.0v6.1M1063.2 602.8v3.5M1064.5 602.8v2.2M1065.8 602.8v4.8M1067.1 605.4v4.8M1068.4 607.9v7.4M1069.7 613.1v8.7M1071.0 619.6v10.0M1072.2 627.4v11.3M1073.6 636.5v12.6M1074.9 646.9v13.9M1076.2 658.6v13.9M1077.5 670.4v15.2M1078.8 683.4v13.9M1080.1 695.0v15.2M1081.4 708.0v13.9M1082.7 719.8v13.9M1084.0 731.4v12.6M1085.2 741.9v12.6M1086.6 752.2v11.3M1087.9 761.4v8.7M1089.2 767.9v7.4M1090.5 773.0v6.1M1091.8 776.9v4.8M1093.1 779.5v2.2M1094.4 778.2v3.5M1095.7 774.4v6.1M1097.0 769.1v7.4M1098.2 762.6v8.7M1099.6 753.5v11.3M1100.9 743.1v12.6M1102.2 732.8v12.6M1103.5 721.0v13.9M1104.8 708.0v15.2M1106.1 695.0v15.2M1107.4 682.0v15.2M1108.7 669.0v15.2M1110.0 656.0v15.2M1111.2 644.4v13.9M1112.6 633.9v12.6M1113.9 624.9v11.3M1115.2 617.0v10.0M1116.5 610.5v8.7M1117.8 606.6v6.1M1119.1 604.0v4.8M1120.4 602.8v3.5M1121.7 602.8v3.5M1123.0 604.0v4.8M1124.2 606.6v7.4M1125.6 611.9v10.0M1126.9 619.6v10.0M1128.2 627.4v12.6M1129.5 637.9v12.6M1130.8 648.2v13.9M1132.1 659.9v15.2M1133.4 672.9v15.2M1134.7 685.9v15.2M1136.0 698.9v15.2M1137.2 711.9v13.9M1138.6 723.6v15.2M1139.9 736.6v12.6M1141.2 747.0v11.3M1142.5 756.1v10.0M1143.8 763.9v10.0M1145.1 771.8v6.1M1146.4 775.6v4.8M1147.7 778.2v3.5M1149.0 778.2v3.5M1150.2 775.6v4.8M1151.6 771.8v6.1M1152.9 763.9v10.0M1154.2 756.1v10.0M1155.5 747.0v11.3M1156.8 736.6v12.6M1158.1 723.6v15.2M1159.4 711.9v13.9M1160.7 698.9v15.2M1162.0 685.9v15.2M1163.2 672.9v15.2M1164.6 659.9v15.2M1165.9 648.2v13.9M1167.2 637.9v12.6M1168.5 627.4v12.6M1169.8 619.6v10.0M1171.1 611.9v10.0M1172.4 606.6v7.4M1173.7 604.0v4.8M1175.0 602.8v3.5M1176.2 602.8v3.5M1177.6 604.0v4.8M1178.9 606.6v6.1M1180.2 610.5v8.7M1181.5 617.0v10.0M1182.8 624.9v11.3M1184.1 633.9v12.6M1185.4 644.4v13.9M1186.7 656.0v15.2M1188.0 669.0v15.2M1189.2 682.0v15.2M1190.6 695.0v15.2M1191.9 708.0v15.2M1193.2 721.0v13.9M1194.5 732.8v12.6M1195.8 743.1v12.6M1197.1 753.5v11.3M1198.4 762.6v8.7M1199.7 769.1v7.4M1201.0 774.4v6.1M1202.2 778.2v3.5M1203.6 779.5v2.2M1204.9 776.9v4.8M1206.2 773.0v6.1M1207.5 766.5v8.7M1208.8 758.8v10.0M1210.1 749.6v11.3M1211.4 739.2v12.6M1212.7 727.5v13.9M1214.0 715.9v13.9M1215.2 702.9v15.2M1216.6 689.9v15.2M1217.9 676.9v15.2M1219.2 663.9v15.2M1220.5 652.1v13.9M1221.8 640.4v13.9M1223.1 630.0v12.6M1224.4 620.9v11.3M1225.7 614.4v8.7M1227.0 607.9v8.7M1228.2 605.4v4.8M1229.6 602.8v4.8M1230.9 602.8v2.2M1232.2 602.8v4.8M1233.5 605.4v6.1M1234.8 609.2v7.4M1236.1 614.4v10.0M1237.4 622.2v11.3M1238.7 631.4v12.6M1240.0 641.8v12.6M1241.2 652.1v15.2M1242.6 665.1v15.2M1243.9 678.1v15.2M1245.2 691.1v15.2M1246.5 704.1v15.2M1247.8 717.1v13.9M1249.1 728.9v13.9M1250.4 740.5v12.6M1251.7 750.9v11.3M1253.0 760.0v10.0M1254.2 767.9v7.4M1255.6 773.0v6.1M1256.9 776.9v4.8M1258.2 779.5v2.2M1259.5 778.2v3.5M1260.8 774.4v6.1M1262.1 769.1v7.4M1263.4 761.4v10.0M1264.7 753.5v10.0M1266.0 743.1v12.6M1267.2 731.4v13.9M1268.6 719.8v13.9M1269.9 706.8v15.2M1271.2 693.8v15.2M1272.5 680.8v15.2M1273.8 667.8v15.2M1275.1 656.0v13.9M1276.4 644.4v13.9M1277.7 632.6v13.9M1279.0 623.5v11.3M1280.2 615.8v10.0M1281.6 610.5v7.4M1282.9 605.4v7.4M1284.2 602.8v4.8M1285.5 602.8v2.2M1286.8 602.8v3.5M1288.1 604.0v6.1M1289.4 607.9v7.4M1290.7 613.1v8.7M1292.0 619.6v11.3M1293.2 628.8v11.3M1294.6 637.9v13.9M1295.9 649.5v13.9M1297.2 661.2v15.2M1298.5 674.2v15.2M1299.8 687.2v15.2M1301.1 700.2v15.2M1302.4 713.2v13.9M1303.7 724.9v13.9M1305.0 736.6v12.6M1306.2 747.0v12.6M1307.6 757.4v10.0M1308.9 765.2v8.7M1310.2 771.8v6.1M1311.5 775.6v6.1M1312.8 779.5v2.2M1314.1 778.2v3.5M1315.4 775.6v4.8M1316.7 770.4v7.4M1318.0 763.9v8.7M1319.2 756.1v10.0M1320.6 745.8v12.6M1321.9 735.4v12.6M1323.2 723.6v13.9M1324.5 710.6v15.2M1325.8 697.6v15.2M1327.1 684.6v15.2M1328.4 671.6v15.2M1329.7 658.6v15.2M1331.0 646.9v13.9M1332.2 636.5v12.6M1333.6 626.1v12.6M1334.9 618.4v10.0M1336.2 611.9v8.7M1337.5 606.6v7.4M1338.8 604.0v4.8M1340.1 602.8v3.5M1341.4 602.8v3.5M1342.7 604.0v4.8M1344.0 606.6v6.1M1345.2 610.5v8.7M1346.6 617.0v10.0M1347.9 624.9v12.6M1349.2 635.2v12.6M1350.5 645.6v13.9M1351.8 657.4v15.2M1353.1 670.4v13.9M1354.4 682.0v16.5M1355.7 696.4v15.2M1357.0 709.4v13.9M1358.2 721.0v15.2M1359.6 734.0v12.6M1360.9 744.4v12.6M1362.2 754.9v10.0M1363.5 762.6v8.7M1364.8 769.1v7.4M1366.1 774.4v6.1M1367.4 778.2v3.5M1368.7 779.5v2.2M1370.0 776.9v4.8M1371.2 771.8v7.4M1372.6 766.5v7.4M1373.9 758.8v10.0M1375.2 749.6v11.3M1376.5 739.2v12.6M1377.8 727.5v13.9M1379.1 714.5v15.2M1380.4 701.5v15.2M1381.7 688.5v15.2M1383.0 675.5v15.2M1384.2 662.5v15.2M1385.6 650.9v13.9M1386.9 639.1v13.9M1388.2 630.0v11.3M1389.5 620.9v11.3M1390.8 613.1v10.0M1392.1 607.9v7.4M1393.4 604.0v6.1M1394.7 602.8v3.5M1396.0 602.8v2.2M1397.2 602.8v4.8M1398.6 605.4v6.1M1399.9 609.2v8.7M1401.2 615.8v8.7M1402.5 622.2v11.3M1403.8 631.4v12.6M1405.1 641.8v13.9M1406.4 653.4v15.2M1407.7 666.4v13.9M1409.0 678.1v15.2M1410.2 691.1v16.5M1411.6 705.4v13.9M1412.9 717.1v15.2M1414.2 730.1v13.9M1415.5 741.9v11.3M1416.8 750.9v11.3M1418.1 760.0v10.0M1419.4 767.9v7.4M1420.7 773.0v6.1M1422.0 776.9v4.8M1423.2 779.5v2.2M1424.6 778.2v3.5M1425.9 774.4v6.1M1427.2 767.9v8.7M1428.5 761.4v8.7M1429.8 752.2v11.3M1431.1 741.9v12.6M1432.4 730.1v13.9M1433.7 718.4v13.9M1435.0 705.4v15.2M1436.2 692.4v15.2M1437.6 679.4v15.2M1438.9 666.4v15.2M1440.2 654.8v13.9M1441.5 643.0v13.9M1442.8 632.6v12.6M1444.1 623.5v11.3M1445.4 615.8v10.0M1446.7 609.2v8.7M1448.0 605.4v6.1M1449.2 602.8v4.8M1450.6 602.8v2.2M1451.9 602.8v3.5M1453.2 604.0v6.1M1454.5 607.9v7.4M1455.8 613.1v8.7M1457.1 619.6v11.3M1458.4 628.8v12.6M1459.7 639.1v12.6M1461.0 649.5v15.2M1462.2 662.5v13.9M1463.6 674.2v15.2M1464.9 687.2v15.2M1466.2 700.2v15.2M1467.5 713.2v15.2M1468.8 726.2v13.9M1470.1 737.9v12.6M1471.4 748.4v11.3M1472.7 757.4v10.0M1474.0 765.2v8.7M1475.2 771.8v7.4M1476.6 776.9v4.8M1477.9 779.5v2.2M1479.2 778.2v3.5M1480.5 775.6v4.8M1481.8 770.4v7.4M1483.1 763.9v8.7M1484.4 754.9v11.3M1485.7 745.8v11.3M1487.0 734.0v13.9M1488.2 722.4v13.9M1489.6 709.4v15.2M1490.9 696.4v15.2M1492.2 683.4v15.2M1493.5 670.4v15.2M1494.8 658.6v13.9M1496.1 646.9v13.9M1497.4 635.2v13.9M1498.7 626.1v11.3M1500.0 618.4v10.0M1501.2 611.9v8.7M1502.6 606.6v7.4M1503.9 604.0v4.8M1505.2 602.8v3.5M1506.5 602.8v3.5" fill="none" stroke="#6cb82c" stroke-width="2.35"/><path d="M809.6 748.4v2.2M810.9 748.4v4.8M812.2 750.9v3.5M813.5 752.2v4.8M814.9 754.9v3.5M816.1 756.1v3.5M817.4 757.4v3.5M818.8 758.8v3.5M820.0 760.0v2.2M821.4 760.0v2.2M822.6 758.8v3.5M823.9 758.8v2.2M825.2 757.4v3.5M826.5 754.9v4.8M827.9 753.5v3.5M829.1 750.9v4.8M830.4 748.4v4.8M831.8 745.8v4.8M833.0 741.9v6.1M834.4 737.9v6.1M835.6 734.0v6.1M836.9 730.1v6.1M838.2 724.9v7.4M839.5 719.8v7.4M840.9 714.5v7.4M842.1 709.4v7.4M843.4 704.1v7.4M844.8 698.9v7.4M846.0 693.8v7.4M847.4 688.5v7.4M848.6 682.0v8.7M849.9 676.9v7.4M851.2 671.6v7.4M852.5 666.4v7.4M853.9 661.2v7.4M855.1 656.0v7.4M856.4 650.9v7.4M857.8 646.9v6.1M859.0 641.8v7.4M860.4 637.9v6.1M861.6 635.2v4.8M862.9 631.4v6.1M864.2 628.8v4.8M865.5 627.4v3.5M866.9 624.9v4.8M868.1 623.5v3.5M869.4 623.5v2.2M870.8 622.2v3.5M872.0 622.2v3.5M873.4 623.5v2.2M874.6 623.5v3.5M875.9 624.9v4.8M877.2 627.4v3.5M878.5 628.8v6.1M879.9 632.6v4.8M881.1 635.2v6.1M882.4 639.1v6.1M883.8 643.0v7.4M885.0 648.2v7.4M886.4 653.4v7.4M887.6 658.6v7.4M888.9 663.9v8.7M890.2 670.4v8.7M891.5 676.9v8.7M892.9 683.4v7.4M894.1 688.5v8.7M895.4 695.0v8.7M896.8 701.5v8.7M898.0 708.0v8.7M899.4 714.5v7.4M900.6 719.8v8.7M901.9 726.2v7.4M903.2 731.4v7.4M904.5 736.6v7.4M905.9 741.9v6.1M907.1 745.8v6.1M908.4 749.6v4.8M909.8 752.2v4.8M911.0 754.9v4.8M912.4 757.4v3.5M913.6 758.8v3.5M914.9 760.0v2.2M916.2 758.8v3.5M917.5 757.4v3.5M918.9 756.1v3.5M920.1 753.5v4.8M921.4 749.6v6.1M922.8 745.8v6.1M924.0 741.9v6.1M925.4 736.6v7.4M926.6 731.4v7.4M927.9 726.2v7.4M929.2 719.8v8.7M930.5 713.2v8.7M931.9 705.4v10.0M933.1 698.9v8.7M934.4 692.4v8.7M935.8 684.6v10.0M937.0 678.1v8.7M938.4 670.4v10.0M939.6 663.9v8.7M940.9 657.4v8.7M942.2 650.9v8.7M943.5 645.6v7.4M944.9 640.4v7.4M946.1 635.2v7.4M947.4 631.4v6.1M948.8 628.8v4.8M950.0 626.1v4.8M951.4 623.5v4.8M952.6 623.5v2.2M953.9 622.2v3.5M955.2 622.2v3.5M956.5 623.5v3.5M957.9 624.9v4.8M959.1 627.4v4.8M960.4 630.0v6.1M961.8 633.9v6.1M963.0 637.9v7.4M964.4 643.0v8.7M965.6 649.5v7.4M966.9 654.8v10.0M968.2 662.5v8.7M969.5 669.0v10.0M970.9 676.9v10.0M972.1 684.6v10.0M973.4 692.4v10.0M974.8 700.2v10.0M976.0 708.0v10.0M977.4 715.9v8.7M978.6 722.4v8.7M979.9 728.9v8.7M981.2 735.4v8.7M982.5 741.9v7.4M983.9 747.0v6.1M985.1 750.9v6.1M986.4 754.9v4.8M987.8 757.4v3.5M989.0 758.8v3.5M990.4 760.0v2.2M991.6 758.8v3.5M992.9 756.1v4.8M994.2 753.5v4.8M995.5 749.6v6.1M996.9 744.4v7.4M998.1 739.2v7.4M999.4 732.8v8.7M1000.8 726.2v8.7M1002.0 718.4v10.0M1003.4 710.6v10.0M1004.6 702.9v10.0M1005.9 693.8v11.3M1007.2 685.9v10.0M1008.5 676.9v11.3M1009.9 669.0v10.0M1011.1 661.2v10.0M1012.4 653.4v10.0M1013.8 646.9v8.7M1015.0 640.4v8.7M1016.4 635.2v7.4M1017.6 631.4v6.1M1018.9 627.4v6.1M1020.2 624.9v4.8M1021.5 623.5v3.5M1022.9 622.2v3.5M1024.2 622.2v3.5M1025.5 623.5v3.5M1026.8 624.9v4.8M1028.1 627.4v6.1M1029.4 631.4v7.4M1030.7 636.5v8.7M1032.0 643.0v8.7M1033.2 649.5v10.0M1034.6 657.4v10.0M1035.9 665.1v10.0M1037.2 672.9v11.3M1038.5 682.0v11.3M1039.8 691.1v11.3M1041.1 700.2v11.3M1042.4 709.4v10.0M1043.7 717.1v10.0M1045.0 724.9v10.0M1046.2 732.8v10.0M1047.6 740.5v7.4M1048.9 745.8v7.4M1050.2 750.9v6.1M1051.5 754.9v4.8M1052.8 757.4v3.5M1054.1 758.8v3.5M1055.4 758.8v3.5M1056.7 756.1v4.8M1058.0 753.5v4.8M1059.2 748.4v7.4M1060.6 743.1v7.4M1061.9 736.6v8.7M1063.2 728.9v10.0M1064.5 721.0v10.0M1065.8 711.9v11.3M1067.1 702.9v11.3M1068.4 693.8v11.3M1069.7 683.4v12.6M1071.0 674.2v11.3M1072.2 665.1v11.3M1073.6 657.4v10.0M1074.9 648.2v11.3M1076.2 641.8v8.7M1077.5 635.2v8.7M1078.8 630.0v7.4M1080.1 626.1v6.1M1081.4 623.5v4.8M1082.7 622.2v3.5M1084.0 622.2v3.5M1085.2 623.5v3.5M1086.6 624.9v4.8M1087.9 627.4v6.1M1089.2 631.4v8.7M1090.5 637.9v8.7M1091.8 644.4v10.0M1093.1 652.1v10.0M1094.4 659.9v11.3M1095.7 669.0v12.6M1097.0 679.4v12.6M1098.2 689.9v11.3M1099.6 698.9v12.6M1100.9 709.4v11.3M1102.2 718.4v11.3M1103.5 727.5v10.0M1104.8 735.4v10.0M1106.1 743.1v8.7M1107.4 749.6v6.1M1108.7 753.5v6.1M1110.0 757.4v3.5M1111.2 758.8v3.5M1112.6 758.8v3.5M1113.9 756.1v4.8M1115.2 752.2v6.1M1116.5 747.0v7.4M1117.8 740.5v8.7M1119.1 732.8v10.0M1120.4 723.6v11.3M1121.7 714.5v11.3M1123.0 705.4v11.3M1124.2 695.0v12.6M1125.6 684.6v12.6M1126.9 674.2v12.6M1128.2 665.1v11.3M1129.5 656.0v11.3M1130.8 648.2v10.0M1132.1 640.4v10.0M1133.4 633.9v8.7M1134.7 628.8v7.4M1136.0 626.1v4.8M1137.2 623.5v4.8M1138.6 622.2v3.5M1139.9 622.2v3.5M1141.2 623.5v4.8M1142.5 626.1v6.1M1143.8 630.0v7.4M1145.1 635.2v8.7M1146.4 641.8v8.7M1147.7 648.2v11.3M1149.0 657.4v11.3M1150.2 666.4v11.3M1151.6 675.5v12.6M1152.9 685.9v12.6M1154.2 696.4v12.6M1155.5 706.8v11.3M1156.8 715.9v11.3M1158.1 724.9v11.3M1159.4 734.0v8.7M1160.7 740.5v8.7M1162.0 747.0v7.4M1163.2 752.2v6.1M1164.6 756.1v4.8M1165.9 758.8v3.5M1167.2 758.8v3.5M1168.5 757.4v3.5M1169.8 753.5v6.1M1171.1 748.4v7.4M1172.4 741.9v8.7M1173.7 735.4v8.7M1175.0 726.2v11.3M1176.2 717.1v11.3M1177.6 708.0v11.3M1178.9 697.6v12.6M1180.2 688.5v11.3M1181.5 678.1v12.6M1182.8 667.8v12.6M1184.1 658.6v11.3M1185.4 650.9v10.0M1186.7 643.0v10.0M1188.0 636.5v8.7M1189.2 630.0v8.7M1190.6 626.1v6.1M1191.9 623.5v4.8M1193.2 622.2v3.5M1194.5 622.2v3.5M1195.8 623.5v3.5M1197.1 624.9v6.1M1198.4 628.8v6.1M1199.7 632.6v8.7M1201.0 639.1v8.7M1202.2 645.6v11.3M1203.6 654.8v11.3M1204.9 663.9v11.3M1206.2 672.9v12.6M1207.5 683.4v11.3M1208.8 692.4v12.6M1210.1 702.9v12.6M1211.4 713.2v11.3M1212.7 722.4v11.3M1214.0 731.4v10.0M1215.2 739.2v8.7M1216.6 745.8v7.4M1217.9 750.9v6.1M1219.2 754.9v6.1M1220.5 758.8v3.5M1221.8 760.0v2.2M1223.1 757.4v4.8M1224.4 754.9v4.8M1225.7 749.6v7.4M1227.0 744.4v7.4M1228.2 737.9v8.7M1229.6 728.9v11.3M1230.9 721.0v10.0M1232.2 710.6v12.6M1233.5 701.5v11.3M1234.8 691.1v12.6M1236.1 680.8v12.6M1237.4 671.6v11.3M1238.7 661.2v12.6M1240.0 653.4v10.0M1241.2 644.4v11.3M1242.6 637.9v8.7M1243.9 632.6v7.4M1245.2 627.4v7.4M1246.5 624.9v4.8M1247.8 623.5v3.5M1249.1 622.2v3.5M1250.4 622.2v4.8M1251.7 624.9v4.8M1253.0 627.4v6.1M1254.2 631.4v7.4M1255.6 636.5v10.0M1256.9 644.4v10.0M1258.2 652.1v10.0M1259.5 659.9v12.6M1260.8 670.4v11.3M1262.1 679.4v12.6M1263.4 689.9v12.6M1264.7 700.2v11.3M1266.0 709.4v12.6M1267.2 719.8v11.3M1268.6 728.9v10.0M1269.9 736.6v8.7M1271.2 743.1v8.7M1272.5 749.6v7.4M1273.8 754.9v4.8M1275.1 757.4v3.5M1276.4 758.8v3.5M1277.7 758.8v3.5M1279.0 756.1v4.8M1280.2 752.2v6.1M1281.6 745.8v8.7M1282.9 739.2v8.7M1284.2 731.4v10.0M1285.5 723.6v10.0M1286.8 714.5v11.3M1288.1 704.1v12.6M1289.4 693.8v12.6M1290.7 684.6v11.3M1292.0 674.2v12.6M1293.2 663.9v12.6M1294.6 656.0v10.0M1295.9 646.9v11.3M1297.2 640.4v8.7M1298.5 633.9v8.7M1299.8 628.8v7.4M1301.1 624.9v6.1M1302.4 623.5v3.5M1303.7 622.2v3.5M1305.0 622.2v3.5M1306.2 623.5v4.8M1307.6 626.1v6.1M1308.9 630.0v7.4M1310.2 635.2v8.7M1311.5 641.8v10.0M1312.8 649.5v10.0M1314.1 657.4v11.3M1315.4 666.4v12.6M1316.7 676.9v12.6M1318.0 687.2v11.3M1319.2 696.4v12.6M1320.6 706.8v12.6M1321.9 717.1v11.3M1323.2 726.2v10.0M1324.5 734.0v10.0M1325.8 741.9v8.7M1327.1 748.4v7.4M1328.4 753.5v4.8M1329.7 756.1v4.8M1331.0 758.8v3.5M1332.2 758.8v3.5M1333.6 757.4v3.5M1334.9 753.5v6.1M1336.2 748.4v7.4M1337.5 741.9v8.7M1338.8 734.0v10.0M1340.1 726.2v10.0M1341.4 717.1v11.3M1342.7 706.8v12.6M1344.0 697.6v11.3M1345.2 687.2v12.6M1346.6 676.9v12.6M1347.9 667.8v11.3M1349.2 658.6v11.3M1350.5 649.5v11.3M1351.8 641.8v10.0M1353.1 635.2v8.7M1354.4 630.0v7.4M1355.7 626.1v6.1M1357.0 623.5v4.8M1358.2 622.2v3.5M1359.6 622.2v3.5M1360.9 623.5v3.5M1362.2 624.9v6.1M1363.5 628.8v7.4M1364.8 633.9v7.4M1366.1 639.1v10.0M1367.4 646.9v10.0M1368.7 654.8v11.3M1370.0 663.9v11.3M1371.2 672.9v12.6M1372.6 683.4v12.6M1373.9 693.8v12.6M1375.2 704.1v11.3M1376.5 713.2v11.3M1377.8 722.4v11.3M1379.1 731.4v10.0M1380.4 739.2v8.7M1381.7 745.8v7.4M1383.0 750.9v7.4M1384.2 756.1v4.8M1385.6 758.8v3.5M1386.9 760.0v2.2M1388.2 757.4v4.8M1389.5 754.9v4.8M1390.8 749.6v7.4M1392.1 744.4v7.4M1393.4 736.6v10.0M1394.7 728.9v10.0M1396.0 719.8v11.3M1397.2 710.6v11.3M1398.6 700.2v12.6M1399.9 689.9v12.6M1401.2 680.8v11.3M1402.5 670.4v12.6M1403.8 661.2v11.3M1405.1 652.1v11.3M1406.4 644.4v10.0M1407.7 637.9v8.7M1409.0 631.4v8.7M1410.2 627.4v6.1M1411.6 624.9v4.8M1412.9 623.5v3.5M1414.2 623.5v2.2M1415.5 623.5v3.5M1416.8 624.9v4.8M1418.1 627.4v6.1M1419.4 631.4v8.7M1420.7 637.9v8.7M1422.0 644.4v10.0M1423.2 652.1v11.3M1424.6 661.2v11.3M1425.9 670.4v12.6M1427.2 680.8v12.6M1428.5 691.1v11.3M1429.8 700.2v12.6M1431.1 710.6v11.3M1432.4 719.8v11.3M1433.7 728.9v10.0M1435.0 736.6v10.0M1436.2 744.4v7.4M1437.6 749.6v7.4M1438.9 754.9v4.8M1440.2 757.4v4.8M1441.5 760.0v2.2M1442.8 758.8v3.5M1444.1 756.1v4.8M1445.4 750.9v7.4M1446.7 745.8v7.4M1448.0 739.2v8.7M1449.2 731.4v10.0M1450.6 722.4v11.3M1451.9 713.2v11.3M1453.2 704.1v11.3M1454.5 693.8v12.6M1455.8 683.4v12.6M1457.1 672.9v12.6M1458.4 663.9v11.3M1459.7 654.8v11.3M1461.0 646.9v10.0M1462.2 639.1v10.0M1463.6 633.9v7.4M1464.9 628.8v7.4M1466.2 624.9v6.1M1467.5 623.5v3.5M1468.8 622.2v3.5M1470.1 622.2v3.5M1471.4 623.5v4.8M1472.7 626.1v6.1M1474.0 630.0v7.4M1475.2 635.2v8.7M1476.6 641.8v10.0M1477.9 649.5v11.3M1479.2 658.6v11.3M1480.5 667.8v11.3M1481.8 676.9v12.6M1483.1 687.2v12.6M1484.4 697.6v12.6M1485.7 708.0v11.3M1487.0 717.1v11.3M1488.2 726.2v11.3M1489.6 735.4v8.7M1490.9 741.9v8.7M1492.2 748.4v7.4M1493.5 753.5v6.1M1494.8 757.4v3.5M1496.1 758.8v3.5M1497.4 758.8v3.5M1498.7 756.1v4.8M1500.0 752.2v6.1M1501.2 748.4v6.1M1502.6 741.9v8.7M1503.9 734.0v10.0M1505.2 724.9v11.3M1506.5 715.9v11.3" fill="none" stroke="#b25cac" stroke-width="2.35"/><path d="M809.6 611.9v2.2M810.9 611.9v4.8M812.2 614.4v4.8M813.5 617.0v6.1M814.9 620.9v7.4M816.1 626.1v6.1M817.4 630.0v7.4M818.8 635.2v7.4M820.0 640.4v7.4M821.4 645.6v7.4M822.6 650.9v8.7M823.9 657.4v8.7M825.2 663.9v8.7M826.5 670.4v8.7M827.9 676.9v8.7M829.1 683.4v8.7M830.4 689.9v8.7M831.8 696.4v10.0M833.0 704.1v8.7M834.4 710.6v8.7M835.6 717.1v8.7M836.9 723.6v8.7M838.2 730.1v8.7M839.5 736.6v7.4M840.9 741.9v8.7M842.1 748.4v7.4M843.4 753.5v6.1M844.8 757.4v7.4M846.0 762.6v6.1M847.4 766.5v6.1M848.6 770.4v4.8M849.9 773.0v4.8M851.2 775.6v3.5M852.5 776.9v3.5M853.9 778.2v3.5M855.1 779.5v2.2M856.4 779.5v2.2M857.8 778.2v3.5M859.0 776.9v3.5M860.4 774.4v4.8M861.6 771.8v4.8M862.9 767.9v6.1M864.2 763.9v6.1M865.5 758.8v7.4M866.9 753.5v7.4M868.1 748.4v7.4M869.4 741.9v8.7M870.8 735.4v8.7M872.0 728.9v8.7M873.4 721.0v10.0M874.6 714.5v8.7M875.9 706.8v10.0M877.2 698.9v10.0M878.5 691.1v10.0M879.9 682.0v11.3M881.1 674.2v10.0M882.4 666.4v10.0M883.8 658.6v10.0M885.0 652.1v8.7M886.4 644.4v10.0M887.6 637.9v8.7M888.9 631.4v8.7M890.2 626.1v7.4M891.5 620.9v7.4M892.9 615.8v7.4M894.1 611.9v6.1M895.4 609.2v4.8M896.8 606.6v4.8M898.0 604.0v4.8M899.4 602.8v3.5M900.6 602.8v2.2M901.9 602.8v2.2M903.2 602.8v3.5M904.5 604.0v4.8M905.9 606.6v4.8M907.1 609.2v6.1M908.4 613.1v7.4M909.8 618.4v6.1M911.0 622.2v8.7M912.4 628.8v8.7M913.6 635.2v8.7M914.9 641.8v10.0M916.2 649.5v10.0M917.5 657.4v11.3M918.9 666.4v10.0M920.1 674.2v11.3M921.4 683.4v11.3M922.8 692.4v11.3M924.0 701.5v11.3M925.4 710.6v10.0M926.6 718.4v11.3M927.9 727.5v10.0M929.2 735.4v10.0M930.5 743.1v8.7M931.9 749.6v8.7M933.1 756.1v8.7M934.4 762.6v7.4M935.8 767.9v6.1M937.0 771.8v6.1M938.4 775.6v4.8M939.6 778.2v3.5M940.9 779.5v2.2M942.2 779.5v2.2M943.5 778.2v3.5M944.9 775.6v4.8M946.1 771.8v6.1M947.4 767.9v6.1M948.8 762.6v7.4M950.0 756.1v8.7M951.4 749.6v8.7M952.6 741.9v10.0M953.9 734.0v10.0M955.2 724.9v11.3M956.5 715.9v11.3M957.9 706.8v11.3M959.1 696.4v12.6M960.4 687.2v11.3M961.8 676.9v12.6M963.0 667.8v11.3M964.4 658.6v11.3M965.6 649.5v11.3M966.9 640.4v11.3M968.2 632.6v10.0M969.5 626.1v8.7M970.9 619.6v8.7M972.1 614.4v7.4M973.4 609.2v7.4M974.8 606.6v4.8M976.0 604.0v4.8M977.4 602.8v3.5M978.6 602.8v2.2M979.9 602.8v3.5M981.2 604.0v4.8M982.5 606.6v6.1M983.9 610.5v6.1M985.1 614.4v8.7M986.4 620.9v8.7M987.8 627.4v10.0M989.0 635.2v11.3M990.4 644.4v11.3M991.6 653.4v11.3M992.9 662.5v12.6M994.2 672.9v12.6M995.5 683.4v12.6M996.9 693.8v12.6M998.1 704.1v12.6M999.4 714.5v12.6M1000.8 724.9v12.6M1002.0 735.4v11.3M1003.4 744.4v10.0M1004.6 752.2v10.0M1005.9 760.0v7.4M1007.2 765.2v8.7M1008.5 771.8v6.1M1009.9 775.6v4.8M1011.1 778.2v3.5M1012.4 779.5v2.2M1013.8 778.2v3.5M1015.0 775.6v4.8M1016.4 771.8v6.1M1017.6 766.5v7.4M1018.9 760.0v8.7M1020.2 752.2v10.0M1021.5 744.4v10.0M1022.9 734.0v12.6M1024.2 724.9v11.3M1025.5 713.2v13.9M1026.8 702.9v12.6M1028.1 691.1v13.9M1029.4 679.4v13.9M1030.7 669.0v12.6M1032.0 657.4v13.9M1033.2 646.9v12.6M1034.6 637.9v11.3M1035.9 628.8v11.3M1037.2 620.9v10.0M1038.5 614.4v8.7M1039.8 609.2v7.4M1041.1 605.4v6.1M1042.4 604.0v3.5M1043.7 602.8v3.5M1045.0 602.8v3.5M1046.2 604.0v3.5M1047.6 605.4v6.1M1048.9 609.2v7.4M1050.2 614.4v10.0M1051.5 622.2v10.0M1052.8 630.0v11.3M1054.1 639.1v12.6M1055.4 649.5v12.6M1056.7 659.9v13.9M1058.0 671.6v13.9M1059.2 683.4v13.9M1060.6 695.0v15.2M1061.9 708.0v13.9M1063.2 719.8v12.6M1064.5 730.1v12.6M1065.8 740.5v12.6M1067.1 750.9v10.0M1068.4 758.8v10.0M1069.7 766.5v7.4M1071.0 771.8v7.4M1072.2 776.9v4.8M1073.6 779.5v2.2M1074.9 778.2v3.5M1076.2 775.6v4.8M1077.5 771.8v6.1M1078.8 765.2v8.7M1080.1 758.8v8.7M1081.4 749.6v11.3M1082.7 739.2v12.6M1084.0 728.9v12.6M1085.2 715.9v15.2M1086.6 704.1v13.9M1087.9 691.1v15.2M1089.2 678.1v15.2M1090.5 666.4v13.9M1091.8 653.4v15.2M1093.1 643.0v12.6M1094.4 632.6v12.6M1095.7 623.5v11.3M1097.0 615.8v10.0M1098.2 609.2v8.7M1099.6 605.4v6.1M1100.9 602.8v4.8M1102.2 602.8v2.2M1103.5 602.8v3.5M1104.8 604.0v6.1M1106.1 607.9v7.4M1107.4 613.1v8.7M1108.7 619.6v11.3M1110.0 628.8v11.3M1111.2 637.9v13.9M1112.6 649.5v13.9M1113.9 661.2v15.2M1115.2 674.2v15.2M1116.5 687.2v15.2M1117.8 700.2v15.2M1119.1 713.2v13.9M1120.4 724.9v13.9M1121.7 736.6v13.9M1123.0 748.4v11.3M1124.2 757.4v10.0M1125.6 765.2v8.7M1126.9 771.8v6.1M1128.2 775.6v6.1M1129.5 779.5v2.2M1130.8 778.2v3.5M1132.1 775.6v4.8M1133.4 770.4v7.4M1134.7 763.9v8.7M1136.0 756.1v10.0M1137.2 745.8v12.6M1138.6 735.4v12.6M1139.9 723.6v13.9M1141.2 710.6v15.2M1142.5 697.6v15.2M1143.8 684.6v15.2M1145.1 671.6v15.2M1146.4 658.6v15.2M1147.7 646.9v13.9M1149.0 636.5v12.6M1150.2 626.1v12.6M1151.6 618.4v10.0M1152.9 611.9v8.7M1154.2 606.6v7.4M1155.5 604.0v4.8M1156.8 602.8v3.5M1158.1 602.8v3.5M1159.4 604.0v4.8M1160.7 606.6v6.1M1162.0 610.5v8.7M1163.2 617.0v11.3M1164.6 626.1v11.3M1165.9 635.2v12.6M1167.2 645.6v13.9M1168.5 657.4v15.2M1169.8 670.4v15.2M1171.1 683.4v15.2M1172.4 696.4v15.2M1173.7 709.4v15.2M1175.0 722.4v13.9M1176.2 734.0v12.6M1177.6 744.4v12.6M1178.9 754.9v10.0M1180.2 762.6v10.0M1181.5 770.4v7.4M1182.8 775.6v4.8M1184.1 778.2v3.5M1185.4 779.5v2.2M1186.7 776.9v4.8M1188.0 771.8v7.4M1189.2 766.5v7.4M1190.6 758.8v10.0M1191.9 748.4v12.6M1193.2 737.9v12.6M1194.5 726.2v13.9M1195.8 714.5v13.9M1197.1 701.5v15.2M1198.4 688.5v15.2M1199.7 675.5v15.2M1201.0 662.5v15.2M1202.2 650.9v13.9M1203.6 639.1v13.9M1204.9 628.8v12.6M1206.2 620.9v10.0M1207.5 613.1v10.0M1208.8 607.9v7.4M1210.1 604.0v6.1M1211.4 602.8v3.5M1212.7 602.8v2.2M1214.0 602.8v4.8M1215.2 605.4v6.1M1216.6 609.2v8.7M1217.9 615.8v10.0M1219.2 623.5v11.3M1220.5 632.6v12.6M1221.8 643.0v12.6M1223.1 653.4v15.2M1224.4 666.4v15.2M1225.7 679.4v15.2M1227.0 692.4v15.2M1228.2 705.4v15.2M1229.6 718.4v13.9M1230.9 730.1v13.9M1232.2 741.9v12.6M1233.5 752.2v10.0M1234.8 760.0v10.0M1236.1 767.9v7.4M1237.4 773.0v6.1M1238.7 776.9v4.8M1240.0 779.5v2.2M1241.2 778.2v3.5M1242.6 774.4v6.1M1243.9 767.9v8.7M1245.2 761.4v8.7M1246.5 752.2v11.3M1247.8 741.9v12.6M1249.1 730.1v13.9M1250.4 718.4v13.9M1251.7 705.4v15.2M1253.0 692.4v15.2M1254.2 679.4v15.2M1255.6 666.4v15.2M1256.9 654.8v13.9M1258.2 643.0v13.9M1259.5 632.6v12.6M1260.8 623.5v11.3M1262.1 615.8v10.0M1263.4 609.2v8.7M1264.7 605.4v6.1M1266.0 602.8v4.8M1267.2 602.8v2.2M1268.6 602.8v3.5M1269.9 604.0v6.1M1271.2 607.9v7.4M1272.5 613.1v10.0M1273.8 620.9v10.0M1275.1 628.8v12.6M1276.4 639.1v13.9M1277.7 650.9v13.9M1279.0 662.5v15.2M1280.2 675.5v15.2M1281.6 688.5v15.2M1282.9 701.5v15.2M1284.2 714.5v13.9M1285.5 726.2v13.9M1286.8 737.9v12.6M1288.1 748.4v11.3M1289.4 757.4v10.0M1290.7 765.2v8.7M1292.0 771.8v7.4M1293.2 776.9v4.8M1294.6 779.5v2.2M1295.9 778.2v3.5M1297.2 775.6v4.8M1298.5 770.4v7.4M1299.8 762.6v10.0M1301.1 754.9v10.0M1302.4 744.4v12.6M1303.7 734.0v12.6M1305.0 722.4v13.9M1306.2 709.4v15.2M1307.6 696.4v15.2M1308.9 683.4v15.2M1310.2 670.4v15.2M1311.5 657.4v15.2M1312.8 645.6v13.9M1314.1 635.2v12.6M1315.4 626.1v11.3M1316.7 618.4v10.0M1318.0 611.9v8.7M1319.2 606.6v7.4M1320.6 604.0v4.8M1321.9 602.8v3.5M1323.2 602.8v3.5M1324.5 604.0v4.8M1325.8 606.6v7.4M1327.1 611.9v8.7M1328.4 618.4v10.0M1329.7 626.1v11.3M1331.0 635.2v13.9M1332.2 646.9v13.9M1333.6 658.6v15.2M1334.9 671.6v15.2M1336.2 684.6v15.2M1337.5 697.6v15.2M1338.8 710.6v13.9M1340.1 722.4v13.9M1341.4 734.0v13.9M1342.7 745.8v11.3M1344.0 754.9v11.3M1345.2 763.9v8.7M1346.6 770.4v7.4M1347.9 775.6v4.8M1349.2 778.2v3.5M1350.5 779.5v2.2M1351.8 776.9v4.8M1353.1 771.8v7.4M1354.4 765.2v8.7M1355.7 757.4v10.0M1357.0 748.4v11.3M1358.2 737.9v12.6M1359.6 726.2v13.9M1360.9 713.2v15.2M1362.2 700.2v15.2M1363.5 687.2v15.2M1364.8 674.2v15.2M1366.1 661.2v15.2M1367.4 649.5v13.9M1368.7 639.1v12.6M1370.0 628.8v12.6M1371.2 619.6v11.3M1372.6 613.1v8.7M1373.9 607.9v7.4M1375.2 604.0v6.1M1376.5 602.8v3.5M1377.8 602.8v2.2M1379.1 602.8v4.8M1380.4 605.4v6.1M1381.7 609.2v8.7M1383.0 615.8v10.0M1384.2 623.5v11.3M1385.6 632.6v12.6M1386.9 643.0v13.9M1388.2 654.8v15.2M1389.5 667.8v13.9M1390.8 679.4v16.5M1392.1 693.8v15.2M1393.4 706.8v13.9M1394.7 718.4v15.2M1396.0 731.4v12.6M1397.2 741.9v12.6M1398.6 752.2v11.3M1399.9 761.4v8.7M1401.2 767.9v8.7M1402.5 774.4v6.1M1403.8 778.2v3.5M1405.1 779.5v2.2M1406.4 776.9v4.8M1407.7 773.0v6.1M1409.0 767.9v7.4M1410.2 760.0v10.0M1411.6 750.9v11.3M1412.9 740.5v12.6M1414.2 730.1v12.6M1415.5 717.1v15.2M1416.8 704.1v15.2M1418.1 691.1v15.2M1419.4 678.1v15.2M1420.7 665.1v15.2M1422.0 653.4v13.9M1423.2 641.8v13.9M1424.6 631.4v12.6M1425.9 622.2v11.3M1427.2 614.4v10.0M1428.5 609.2v7.4M1429.8 605.4v6.1M1431.1 602.8v4.8M1432.4 602.8v2.2M1433.7 602.8v3.5M1435.0 604.0v6.1M1436.2 607.9v8.7M1437.6 614.4v8.7M1438.9 620.9v11.3M1440.2 630.0v12.6M1441.5 640.4v12.6M1442.8 650.9v15.2M1444.1 663.9v13.9M1445.4 675.5v15.2M1446.7 688.5v15.2M1448.0 701.5v15.2M1449.2 714.5v15.2M1450.6 727.5v13.9M1451.9 739.2v12.6M1453.2 749.6v11.3M1454.5 758.8v10.0M1455.8 766.5v8.7M1457.1 773.0v6.1M1458.4 776.9v4.8M1459.7 779.5v2.2M1461.0 778.2v3.5M1462.2 774.4v6.1M1463.6 769.1v7.4M1464.9 762.6v8.7M1466.2 753.5v11.3M1467.5 744.4v11.3M1468.8 732.8v13.9M1470.1 721.0v13.9M1471.4 708.0v15.2M1472.7 695.0v15.2M1474.0 682.0v15.2M1475.2 669.0v15.2M1476.6 657.4v13.9M1477.9 645.6v13.9M1479.2 633.9v13.9M1480.5 624.9v11.3M1481.8 617.0v10.0M1483.1 610.5v8.7M1484.4 606.6v6.1M1485.7 604.0v4.8M1487.0 602.8v3.5M1488.2 602.8v3.5M1489.6 604.0v4.8M1490.9 606.6v7.4M1492.2 611.9v8.7M1493.5 618.4v11.3M1494.8 627.4v11.3M1496.1 636.5v12.6M1497.4 646.9v15.2M1498.7 659.9v13.9M1500.0 671.6v15.2M1501.2 684.6v15.2M1502.6 697.6v15.2M1503.9 710.6v15.2M1505.2 723.6v13.9M1506.5 735.4v12.6" fill="none" stroke="#fcfce0" stroke-width="2.35"/><path d="M809.6 751.9v3.0M810.9 751.9v6.9M812.2 755.8v8.2M813.5 758.4v5.6M814.9 758.4v5.6M816.1 761.0v4.3M817.4 761.0v4.3M818.8 761.0v4.3M820.0 761.0v4.3M821.4 761.0v3.0M822.6 754.5v9.5M823.9 751.9v5.6M825.2 749.3v5.6M826.5 749.3v6.9M827.9 753.2v4.3M829.1 750.6v6.9M830.4 750.6v12.1M831.8 759.7v6.9M833.0 763.6v3.0M834.4 763.6v3.0M835.6 761.0v5.6M836.9 757.1v6.9M838.2 757.1v4.3M839.5 753.2v8.2M840.9 751.9v4.3M842.1 750.6v4.3M843.4 746.7v6.9M844.8 746.7v6.9M846.0 750.6v5.6M847.4 753.2v8.2M848.6 758.4v3.0M849.9 758.4v6.9M851.2 762.3v3.0M852.5 762.3v5.6M853.9 762.3v5.6M855.1 757.1v8.2M856.4 757.1v6.9M857.8 761.0v3.0M859.0 758.4v5.6M860.4 754.5v6.9M861.6 751.9v5.6M862.9 751.9v3.0M864.2 751.9v5.6M865.5 754.5v3.0M866.9 754.5v10.8M868.1 762.3v4.3M869.4 763.6v4.3M870.8 759.7v8.2M872.0 759.7v5.6M873.4 759.7v5.6M874.6 750.6v12.1M875.9 748.0v5.6M877.2 748.0v10.8M878.5 755.8v3.0M879.9 755.8v9.5M881.1 759.7v5.6M882.4 758.4v4.3M883.8 758.4v8.2M885.0 763.6v3.0M886.4 758.4v8.2M887.6 753.2v8.2M888.9 751.9v4.3M890.2 751.9v6.9M891.5 754.5v4.3M892.9 751.9v5.6M894.1 751.9v4.3M895.4 753.2v4.3M896.8 754.5v4.3M898.0 755.8v12.1M899.4 759.7v8.2M900.6 759.7v3.0M901.9 757.1v5.6M903.2 751.9v8.2M904.5 751.9v5.6M905.9 749.3v8.2M907.1 749.3v8.2M908.4 753.2v4.3M909.8 753.2v6.9M911.0 757.1v4.3M912.4 758.4v5.6M913.6 761.0v6.9M914.9 762.3v5.6M916.2 755.8v9.5M917.5 755.8v4.3M918.9 750.6v9.5M920.1 750.6v4.3M921.4 751.9v9.5M922.8 758.4v4.3M924.0 757.1v5.6M925.4 757.1v12.1M926.6 761.0v8.2M927.9 757.1v6.9M929.2 757.1v5.6M930.5 754.5v8.2M931.9 750.6v6.9M933.1 748.0v5.6M934.4 748.0v4.3M935.8 749.3v10.8M937.0 757.1v3.0M938.4 757.1v8.2M939.6 762.3v3.0M940.9 759.7v5.6M942.2 759.7v4.3M943.5 755.8v8.2M944.9 753.2v5.6M946.1 753.2v5.6M947.4 753.2v5.6M948.8 753.2v4.3M950.0 754.5v12.1M951.4 763.6v5.6M952.6 761.0v8.2M953.9 755.8v8.2M955.2 755.8v5.6M956.5 758.4v3.0M957.9 749.3v12.1M959.1 749.3v10.8M960.4 757.1v6.9M961.8 761.0v3.0M963.0 761.0v3.0M964.4 759.7v4.3M965.6 755.8v6.9M966.9 755.8v8.2M968.2 753.2v10.8M969.5 753.2v3.0M970.9 750.6v5.6M972.1 750.6v9.5M973.4 757.1v5.6M974.8 759.7v3.0M976.0 759.7v4.3M977.4 761.0v4.3M978.6 754.5v10.8M979.9 751.9v5.6M981.2 751.9v3.0M982.5 751.9v6.9M983.9 755.8v4.3M985.1 757.1v3.0M986.4 757.1v10.8M987.8 762.3v5.6M989.0 755.8v9.5M990.4 754.5v4.3M991.6 754.5v3.0M992.9 748.0v9.5M994.2 748.0v4.3M995.5 749.3v6.9M996.9 753.2v8.2M998.1 758.4v3.0M999.4 758.4v5.6M1000.8 761.0v5.6M1002.0 762.3v4.3M1003.4 757.1v8.2M1004.6 753.2v6.9M1005.9 753.2v5.6M1007.2 754.5v4.3M1008.5 754.5v3.0M1009.9 754.5v5.6M1011.1 757.1v9.5M1012.4 761.0v5.6M1013.8 761.0v3.0M1015.0 749.3v14.7M1016.4 749.3v6.9M1017.6 753.2v5.6M1018.9 755.8v8.2M1020.2 761.0v3.0M1021.5 761.0v9.5M1022.9 757.1v13.4M1024.2 755.8v4.3M1025.5 755.8v3.0M1026.8 755.8v3.0M1028.1 755.8v5.6M1029.4 758.4v5.6M1030.7 761.0v6.9M1032.0 764.9v5.6M1033.2 759.7v10.8M1034.6 758.4v4.3M1035.9 757.1v4.3M1037.2 755.8v4.3M1038.5 754.5v4.3M1039.8 754.5v9.5M1041.1 761.0v6.9M1042.4 764.9v3.0M1043.7 761.0v6.9M1045.0 755.8v8.2M1046.2 754.5v4.3M1047.6 753.2v4.3M1048.9 751.9v4.3M1050.2 751.9v9.5M1051.5 758.4v10.8M1052.8 766.2v4.3M1054.1 762.3v8.2M1055.4 755.8v9.5M1056.7 754.5v4.3M1058.0 754.5v3.0M1059.2 754.5v4.3M1060.6 755.8v9.5M1061.9 759.7v5.6M1063.2 759.7v6.9M1064.5 754.5v12.1M1065.8 754.5v3.0M1067.1 750.6v6.9M1068.4 750.6v4.3M1069.7 751.9v9.5M1071.0 758.4v5.6M1072.2 761.0v6.9M1073.6 763.6v4.3M1074.9 755.8v10.8M1076.2 748.0v10.8M1077.5 748.0v4.3M1078.8 749.3v10.8M1080.1 757.1v3.0M1081.4 757.1v5.6M1082.7 759.7v6.9M1084.0 759.7v6.9M1085.2 754.5v8.2M1086.6 754.5v3.0M1087.9 754.5v3.0M1089.2 754.5v8.2M1090.5 759.7v3.0M1091.8 759.7v4.3M1093.1 761.0v3.0M1094.4 759.7v4.3M1095.7 755.8v6.9M1097.0 754.5v4.3M1098.2 754.5v6.9M1099.6 758.4v4.3M1100.9 759.7v3.0M1102.2 758.4v4.3M1103.5 758.4v3.0M1104.8 755.8v5.6M1106.1 755.8v4.3M1107.4 757.1v8.2M1108.7 761.0v4.3M1110.0 759.7v4.3M1111.2 758.4v4.3M1112.6 753.2v8.2M1113.9 749.3v6.9M1115.2 749.3v5.6M1116.5 751.9v9.5M1117.8 758.4v5.6M1119.1 761.0v3.0M1120.4 761.0v4.3M1121.7 761.0v4.3M1123.0 753.2v10.8M1124.2 749.3v6.9M1125.6 749.3v5.6M1126.9 751.9v14.7M1128.2 759.7v6.9M1129.5 759.7v4.3M1130.8 757.1v6.9M1132.1 750.6v9.5M1133.4 750.6v8.2M1134.7 753.2v5.6M1136.0 753.2v6.9M1137.2 757.1v8.2M1138.6 755.8v9.5M1139.9 755.8v5.6M1141.2 750.6v10.8M1142.5 749.3v4.3M1143.8 749.3v5.6M1145.1 751.9v12.1M1146.4 761.0v5.6M1147.7 761.0v5.6M1149.0 758.4v5.6M1150.2 755.8v5.6M1151.6 755.8v5.6M1152.9 758.4v4.3M1154.2 758.4v4.3M1155.5 758.4v8.2M1156.8 757.1v9.5M1158.1 751.9v8.2M1159.4 751.9v3.0M1160.7 751.9v5.6M1162.0 754.5v3.0M1163.2 754.5v5.6M1164.6 757.1v8.2M1165.9 762.3v3.0M1167.2 757.1v8.2M1168.5 754.5v5.6M1169.8 754.5v4.3M1171.1 755.8v3.0M1172.4 755.8v9.5M1173.7 762.3v8.2M1175.0 758.4v12.1M1176.2 758.4v4.3M1177.6 755.8v6.9M1178.9 749.3v9.5M1180.2 749.3v8.2M1181.5 754.5v9.5M1182.8 761.0v9.5M1184.1 761.0v9.5M1185.4 758.4v5.6M1186.7 757.1v4.3M1188.0 755.8v4.3M1189.2 755.8v8.2M1190.6 761.0v3.0M1191.9 761.0v6.9M1193.2 758.4v9.5M1194.5 758.4v3.0M1195.8 757.1v4.3M1197.1 754.5v5.6M1198.4 754.5v6.9M1199.7 757.1v4.3M1201.0 757.1v12.1M1202.2 766.2v3.0M1203.6 763.6v5.6M1204.9 755.8v10.8M1206.2 754.5v4.3M1207.5 754.5v3.0M1208.8 754.5v10.8M1210.1 762.3v8.2M1211.4 761.0v9.5M1212.7 754.5v9.5M1214.0 753.2v4.3M1215.2 751.9v4.3M1216.6 751.9v9.5M1217.9 758.4v4.3M1219.2 758.4v4.3M1220.5 758.4v8.2M1221.8 754.5v12.1M1223.1 754.5v4.3M1224.4 749.3v9.5M1225.7 749.3v6.9M1227.0 753.2v10.8M1228.2 759.7v4.3M1229.6 758.4v4.3M1230.9 757.1v4.3M1232.2 755.8v4.3M1233.5 754.5v4.3M1234.8 754.5v5.6M1236.1 757.1v9.5M1237.4 763.6v3.0M1238.7 763.6v5.6M1240.0 755.8v13.4M1241.2 751.9v6.9M1242.6 750.6v4.3M1243.9 750.6v5.6M1245.2 753.2v9.5M1246.5 759.7v6.9M1247.8 762.3v4.3M1249.1 762.3v3.0M1250.4 755.8v9.5M1251.7 749.3v9.5M1253.0 749.3v6.9M1254.2 753.2v10.8M1255.6 761.0v8.2M1256.9 761.0v8.2M1258.2 761.0v3.0M1259.5 759.7v4.3M1260.8 753.2v9.5M1262.1 753.2v5.6M1263.4 755.8v3.0M1264.7 755.8v8.2M1266.0 761.0v4.3M1267.2 759.7v5.6M1268.6 750.6v12.1M1269.9 750.6v6.9M1271.2 754.5v3.0M1272.5 754.5v5.6M1273.8 757.1v9.5M1275.1 763.6v3.0M1276.4 759.7v6.9M1277.7 757.1v5.6M1279.0 748.0v12.1M1280.2 748.0v8.2M1281.6 753.2v6.9M1282.9 757.1v10.8M1284.2 764.9v5.6M1285.5 758.4v12.1M1286.8 754.5v6.9M1288.1 748.0v9.5M1289.4 748.0v6.9M1290.7 751.9v10.8M1292.0 759.7v8.2M1293.2 763.6v4.3M1294.6 758.4v8.2M1295.9 753.2v8.2M1297.2 751.9v4.3M1298.5 751.9v8.2M1299.8 754.5v5.6M1301.1 754.5v10.8M1302.4 759.7v5.6M1303.7 755.8v6.9M1305.0 753.2v5.6M1306.2 753.2v3.0M1307.6 751.9v4.3M1308.9 751.9v6.9M1310.2 755.8v8.2M1311.5 759.7v4.3M1312.8 759.7v4.3M1314.1 753.2v10.8M1315.4 751.9v4.3M1316.7 750.6v4.3M1318.0 750.6v5.6M1319.2 753.2v9.5M1320.6 759.7v6.9M1321.9 758.4v8.2M1323.2 755.8v5.6M1324.5 753.2v5.6M1325.8 750.6v5.6M1327.1 750.6v5.6M1328.4 753.2v10.8M1329.7 761.0v6.9M1331.0 761.0v6.9M1332.2 759.7v4.3M1333.6 754.5v8.2M1334.9 754.5v5.6M1336.2 754.5v5.6M1337.5 754.5v10.8M1338.8 762.3v8.2M1340.1 764.9v5.6M1341.4 755.8v12.1M1342.7 750.6v8.2M1344.0 750.6v8.2M1345.2 754.5v4.3M1346.6 754.5v12.1M1347.9 763.6v8.2M1349.2 758.4v13.4M1350.5 754.5v6.9M1351.8 754.5v3.0M1353.1 750.6v6.9M1354.4 750.6v4.3M1355.7 751.9v13.4M1357.0 762.3v4.3M1358.2 763.6v3.0M1359.6 754.5v12.1M1360.9 751.9v5.6M1362.2 751.9v4.3M1363.5 751.9v4.3M1364.8 751.9v6.9M1366.1 755.8v10.8M1367.4 763.6v4.3M1368.7 762.3v5.6M1370.0 751.9v13.4M1371.2 751.9v3.0M1372.6 751.9v9.5M1373.9 758.4v4.3M1375.2 759.7v8.2M1376.5 758.4v9.5M1377.8 753.2v8.2M1379.1 749.3v6.9M1380.4 746.7v5.6M1381.7 746.7v10.8M1383.0 754.5v8.2M1384.2 759.7v6.9M1385.6 758.4v8.2M1386.9 754.5v6.9M1388.2 750.6v6.9M1389.5 750.6v6.9M1390.8 754.5v9.5M1392.1 761.0v5.6M1393.4 761.0v5.6M1394.7 757.1v6.9M1396.0 757.1v6.9M1397.2 754.5v9.5M1398.6 754.5v3.0M1399.9 754.5v3.0M1401.2 754.5v6.9M1402.5 758.4v6.9M1403.8 761.0v4.3M1405.1 758.4v5.6M1406.4 750.6v10.8M1407.7 750.6v4.3M1409.0 751.9v9.5M1410.2 757.1v4.3M1411.6 757.1v6.9M1412.9 761.0v5.6M1414.2 758.4v8.2M1415.5 751.9v9.5M1416.8 748.0v6.9M1418.1 748.0v9.5M1419.4 754.5v3.0M1420.7 754.5v13.4M1422.0 764.9v3.0M1423.2 761.0v6.9M1424.6 758.4v5.6M1425.9 753.2v8.2M1427.2 753.2v4.3M1428.5 754.5v8.2M1429.8 759.7v5.6M1431.1 762.3v6.9M1432.4 762.3v6.9M1433.7 753.2v12.1M1435.0 753.2v4.3M1436.2 754.5v5.6M1437.6 757.1v6.9M1438.9 761.0v6.9M1440.2 762.3v5.6M1441.5 762.3v3.0M1442.8 759.7v5.6M1444.1 754.5v8.2M1445.4 754.5v5.6M1446.7 757.1v6.9M1448.0 761.0v3.0M1449.2 761.0v6.9M1450.6 755.8v12.1M1451.9 753.2v5.6M1453.2 750.6v5.6M1454.5 749.3v4.3M1455.8 749.3v9.5M1457.1 755.8v9.5M1458.4 762.3v4.3M1459.7 757.1v9.5M1461.0 757.1v4.3M1462.2 754.5v6.9M1463.6 753.2v4.3M1464.9 753.2v8.2M1466.2 758.4v6.9M1467.5 762.3v4.3M1468.8 758.4v8.2M1470.1 758.4v4.3M1471.4 754.5v8.2M1472.7 754.5v4.3M1474.0 755.8v8.2M1475.2 761.0v8.2M1476.6 759.7v9.5M1477.9 759.7v3.0M1479.2 758.4v4.3M1480.5 750.6v10.8M1481.8 750.6v4.3M1483.1 751.9v4.3M1484.4 753.2v6.9M1485.7 757.1v6.9M1487.0 755.8v8.2M1488.2 753.2v5.6M1489.6 753.2v5.6M1490.9 754.5v4.3M1492.2 754.5v5.6M1493.5 757.1v10.8M1494.8 764.9v3.0M1496.1 764.9v3.0M1497.4 758.4v9.5M1498.7 755.8v5.6M1500.0 750.6v8.2M1501.2 750.6v9.5M1502.6 757.1v8.2M1503.9 759.7v5.6M1505.2 759.7v6.9M1506.5 754.5v12.1" fill="none" stroke="#ffffff" stroke-width="2.500"/><path d="M1042.500 640V841" stroke="#6cb82c" stroke-width="2.600"/><path d="M1041.500 627V716" stroke="#b25cac" stroke-width="3.200"/><path d="M1042.500 603V640M1042.800 711V729" stroke="#fcfce0" stroke-width="3"/><path d="M1274 600V628" stroke="#fcfce0" stroke-width="1.800"/><path d="M1273.200 672V704" stroke="#6cb82c" stroke-width="3.400"/><rect x="809" y="431.800" width="699" height="1.500" fill="#e02020"/><rect x="809" y="509.800" width="699" height="1.500" fill="#e8e030"/><rect x="809" y="553.700" width="699" height="2.400" fill="#7cdcec"/><rect x="809" y="629.900" width="699" height="2.400" fill="#f8a018"/><rect x="807" y="568" width="703" height="3.200" fill="#c4c2c0"/><rect x="807" y="809.900" width="703" height="4.200" fill="#c4c2c0"/><rect x="1017.900" y="386" width="4.200" height="612" fill="#c4c2c0"/><rect x="1297.900" y="386" width="3.200" height="612" fill="#c4c2c0"/><rect x="871.00" y="998" width="2" height="6.500" fill="#6a6a6a"/><rect x="981.88" y="998" width="2" height="6.500" fill="#6a6a6a"/><rect x="1092.76" y="998" width="2" height="6.500" fill="#6a6a6a"/><rect x="1203.64" y="998" width="2" height="6.500" fill="#6a6a6a"/><rect x="1314.52" y="998" width="2" height="6.500" fill="#6a6a6a"/><rect x="1425.40" y="998" width="2" height="6.500" fill="#6a6a6a"/></svg><div class="cl" style="left:808.1px;top:541.9px;font-size:22.4px;transform:scaleX(0.884)">Ha</div><div class="cl" style="left:808.1px;top:819.8px;font-size:22.4px;transform:scaleX(0.864)">Hb</div><div class="cl" style="left:980.1px;top:968.0px;font-size:22.4px;transform:scaleX(1.005)">Va</div><div class="cl" style="left:1306.5px;top:968.0px;font-size:22.4px;transform:scaleX(0.943)">Vb</div><div class="xl" style="left:822.1px;top:1006.500px">2,400</div><div class="xl" style="left:933.0px;top:1006.500px">2,600</div><div class="xl" style="left:1043.9px;top:1006.500px">2,800</div><div class="xl" style="left:1154.7px;top:1006.500px">3,000</div><div class="xl" style="left:1265.6px;top:1006.500px">3,200</div><div class="xl" style="left:1376.5px;top:1006.500px">3,400</div><div class="t" style="left:1314.600px;top:1028.600px;font-size:21.500px;font-weight:bold;transform-origin:0 50%;transform:scaleX(1.06)">T</div><div class="t" style="left:1508px;top:1031.2px;font-size:18.4px;letter-spacing:0.64px;color:#000;">ms</div><svg style="left:0;top:0" width="1614" height="1127"><rect x="1046" y="333.500" width="227" height="41.300" fill="#b0b0b0"/><rect x="1046" y="333.500" width="227" height="4.500" fill="#d6d6d6"/><rect x="1046" y="333.500" width="5.500" height="39" fill="#d2d2d2"/><rect x="1048" y="372.300" width="225" height="2.500" fill="#000"/><rect x="1270.800" y="336" width="2.200" height="38.800" fill="#000"/><path d="M1075 340L1054 354.500" stroke="#000" stroke-width="3.400" fill="none"/><path d="M1054 355L1075 370" stroke="#9c9c9c" stroke-width="2.600" fill="none"/><rect x="1076.200" y="339" width="2.200" height="32.500" fill="#dcdcdc"/><rect x="1076.200" y="364" width="2.200" height="7.500" fill="#fff"/><rect x="1243.600" y="338.500" width="2.200" height="33" fill="#000"/><path d="M1245 340L1267.500 354.500" stroke="#2c2c2c" stroke-width="2.200" fill="none"/><path d="M1268 356.500L1246 371" stroke="#f4f4f4" stroke-width="3.600" fill="none"/><path d="M1021.300 386V350.200H1046" stroke="#000" stroke-width="2.300" fill="none"/><path d="M1273 350.200H1297.600V386" stroke="#000" stroke-width="2.300" fill="none"/><rect x="1529.200" y="576.800" width="42.800" height="225.800" fill="#b0b0b0"/><rect x="1531" y="576.800" width="41" height="4.200" fill="#cacaca"/><rect x="1566.500" y="576.800" width="5.500" height="225.800" fill="#d2d2d2"/><rect x="1529.200" y="576.800" width="1.900" height="225.800" fill="#000"/><rect x="1529.200" y="800.800" width="37" height="1.800" fill="#5a5a5a"/><path d="M1548 584L1534 606" stroke="#9a9a9a" stroke-width="2.400" fill="none"/><path d="M1549 584L1564 606" stroke="#000" stroke-width="3.400" fill="none"/><rect x="1533" y="605" width="31" height="3" fill="#e4e4e4"/><rect x="1534" y="774.500" width="31" height="2.800" fill="#000"/><path d="M1535 778L1548 799" stroke="#f6f6f6" stroke-width="3.600" fill="none"/><path d="M1563.500 778L1550 799" stroke="#3c3c3c" stroke-width="2.400" fill="none"/><path d="M1513 571.400H1547.800V577" stroke="#000" stroke-width="2.300" fill="none"/><path d="M1513 810H1547.800V804.300" stroke="#000" stroke-width="2.300" fill="none"/><polygon points="1520,442.500 1520,464.500 1510,453.500" fill="#e6201c" stroke="#000" stroke-width=".9"/><polygon points="1520,504.500 1520,526.500 1510,515.500" fill="#f0e838" stroke="#000" stroke-width=".9"/><polygon points="1520,564 1520,570.500 1514,570.500" fill="#6cc8e0" stroke="#000" stroke-width=".8"/><rect x="1510" y="572" width="2" height="5" fill="#6cc8e0"/><rect x="1510" y="633" width="2.500" height="5.500" fill="#f0a018"/></svg><div class="a" style="left:807px;top:1066.500px;width:701px;height:29px;background:#ececea;border-top:1.5px solid #e2e2e2;border-bottom:1.5px solid #e6e6e6"></div><div class="a" style="left:807px;top:1068px;width:31px;height:26px;background:#f0f0ef"></div><div class="a" style="left:1477px;top:1068px;width:31px;height:26px;background:#f0f0ef"></div><svg style="left:817.500px;top:1075px" width="7" height="11"><polygon points="7,0 7,11 0,5.500" fill="#202020"/></svg><svg style="left:1489.500px;top:1075px" width="7" height="11"><polygon points="0,0 0,11 7,5.500" fill="#202020"/></svg><div class="a" style="left:1023.500px;top:1067.300px;width:97.500px;height:27px;border:1.5px solid #8a8a8a;border-radius:3px;background:linear-gradient(#f5f5f5 0,#ebebeb 47%,#d8d8d8 53%,#cbcbcb 100%);box-shadow:inset 0 0 0 1px #f8f8f8"></div><div class="a" style="left:1064.5px;top:1074.500px;width:2.200px;height:11.500px;background:#5c5c5c;box-shadow:1px 0 0 #f0f0f0"></div><div class="a" style="left:1069.0px;top:1074.500px;width:2.200px;height:11.500px;background:#5c5c5c;box-shadow:1px 0 0 #f0f0f0"></div><div class="a" style="left:1073.5px;top:1074.500px;width:2.200px;height:11.500px;background:#5c5c5c;box-shadow:1px 0 0 #f0f0f0"></div><svg style="left:0;top:0" width="1614" height="1127" fill="none"><rect x="18.3" y="18" width="2.0" height="20.700000000000003" fill="#000"/><rect x="16.7" y="18.6" width="5.200" height="1.800" fill="#000"/><rect x="16.7" y="23.8" width="5.200" height="1.800" fill="#000"/><rect x="16.7" y="29.1" width="5.200" height="1.800" fill="#000"/><rect x="16.7" y="34.3" width="5.200" height="1.800" fill="#000"/><rect x="19.3" y="35.1" width="7.699999999999999" height="2" fill="#000"/><path d="M24.500 26.500L29.500 20.200H35.500L39 23.600L44.300 18.400" stroke="#e81c1c" stroke-width="2"/><path d="M40 39.500L44.500 43" stroke="#7a3c10" stroke-width="2.800"/><circle cx="35" cy="33.800" r="7" fill="#fff" stroke="#000" stroke-width="2.200"/><path d="M36.500 69.500H47l2.500 3H58.500V91.500H36.500z" fill="#e8a820" stroke="#b47820" stroke-width="1.600"/><path d="M38.500 91L42 79.500H64L59 91z" fill="#f8d450" stroke="#c89020" stroke-width="1.200"/><path d="M42.500 83H62" stroke="#fce890" stroke-width="2.500"/><path d="M49 66.500C55 65.500 59.500 69 59 75" stroke="#1c3c9c" stroke-width="4.200"/><path d="M52.500 75.500H64.500L58 83z" fill="#1c3c9c"/><rect x="127.9" y="65" width="2.2" height="21.599999999999994" fill="#000"/><rect x="126.4" y="65.6" width="5.200" height="1.800" fill="#000"/><rect x="126.4" y="71.1" width="5.200" height="1.800" fill="#000"/><rect x="126.4" y="76.7" width="5.200" height="1.800" fill="#000"/><rect x="126.4" y="82.2" width="5.200" height="1.800" fill="#000"/><rect x="129" y="83.0" width="8.5" height="2" fill="#000"/><path d="M133.500 72.600L139.600 66H147L150.300 69.400L154.500 65.700" stroke="#e81c1c" stroke-width="2"/><path d="M136.800 74.700L143.500 68V72.500H155.500V77H143.500V81.500z" fill="#1c3c9c"/><rect x="139" y="82" width="3" height="9.500" fill="#1c3c9c"/><path d="M145 91.500V86.800H154.200V91.500M149.600 86.800V91.500" stroke="#1c3c9c" stroke-width="1.800"/><path d="M224.2 65H244.88479999999998L249.79999999999998 69.9152V91.7H224.2z" fill="#3c3c3a"/><rect x="230.6" y="65" width="13.568000000000001" height="10.947" fill="#e8e8e8"/><rect x="235.976" y="66.068" width="5.120000000000001" height="8.01" fill="#3c3c3a"/><rect x="228.808" y="81.554" width="16.384" height="10.145999999999999" fill="#f8e8a4"/><rect x="230.856" y="84.224" width="12.288" height="1.6019999999999999" fill="#c8b880"/><rect x="230.856" y="87.695" width="12.288" height="1.6019999999999999" fill="#c8b880"/><rect x="338.40000000000003" y="64.8" width="1.8" height="22.200000000000003" fill="#000"/><rect x="336.7" y="65.4" width="5.200" height="1.800" fill="#000"/><rect x="336.7" y="71.1" width="5.200" height="1.800" fill="#000"/><rect x="336.7" y="76.9" width="5.200" height="1.800" fill="#000"/><rect x="336.7" y="82.6" width="5.200" height="1.800" fill="#000"/><path d="M344.500 72.600L348.500 66H355.500L360 69L364.500 65" stroke="#e81c1c" stroke-width="1.900"/><path d="M346.5 73.2H361.2056L364.7 76.6944V91.4H346.5z" fill="#3c3c3a"/><rect x="351.05" y="73.2" width="9.646" height="7.461999999999999" fill="#e8e8e8"/><rect x="354.872" y="73.928" width="3.64" height="5.46" fill="#3c3c3a"/><rect x="349.776" y="84.48400000000001" width="11.648" height="6.9159999999999995" fill="#f8e8a4"/><rect x="351.232" y="86.304" width="8.735999999999999" height="1.0919999999999999" fill="#c8b880"/><rect x="351.232" y="88.67" width="8.735999999999999" height="1.0919999999999999" fill="#c8b880"/><path d="M493.500 66H502l4 4V81.500H493.500z" fill="#f4f4f4" stroke="#484848" stroke-width="1.500"/><path d="M498.500 70.500H508l4 4V87H498.500z" fill="#f4f4f4" stroke="#484848" stroke-width="1.500"/><path d="M504.500 74.500H514l4.500 4.500V91H504.500z" fill="#fff" stroke="#383838" stroke-width="1.700"/><path d="M508 86.500L510.500 83.500H513.500L516.500 80" stroke="#e81c1c" stroke-width="1.800"/><circle cx="909" cy="78.500" r="12.800" fill="#1c7cc4"/><circle cx="909" cy="77" r="11" fill="#2088cc" opacity=".6"/><path d="M899.5 78.500L906 71.500V75.500H918.5V81.500H906V85.500z" fill="#fff"/><circle cx="1006" cy="78.500" r="12.800" fill="#1c7cc4"/><circle cx="1006" cy="77" r="11" fill="#2088cc" opacity=".6"/><path d="M1015.5 78.500L1009 71.500V75.500H996.5V81.500H1009V85.500z" fill="#fff"/><rect x="1077.8" y="65.7" width="2.0" height="25.599999999999994" fill="#000"/><rect x="1076.2" y="66.3" width="5.200" height="1.800" fill="#000"/><rect x="1076.2" y="73.2" width="5.200" height="1.800" fill="#000"/><rect x="1076.2" y="80.0" width="5.200" height="1.800" fill="#000"/><rect x="1076.2" y="86.9" width="5.200" height="1.800" fill="#000"/><rect x="1078.8" y="87.7" width="27.200000000000045" height="2" fill="#000"/><rect x="1083" y="87" width="1.600" height="4.500" fill="#000"/><rect x="1088" y="87" width="1.600" height="4.500" fill="#000"/><rect x="1093" y="87" width="1.600" height="4.500" fill="#000"/><rect x="1098" y="87" width="1.600" height="4.500" fill="#000"/><rect x="1103" y="87" width="1.600" height="4.500" fill="#000"/><path d="M1082.500 84.500H1087.500L1091.500 78L1096 76L1101.500 68.500" stroke="#1c9c3c" stroke-width="2"/><path d="M1083 79.500L1087.500 71.500H1094L1099 77.500L1104.500 68" stroke="#e81c1c" stroke-width="2"/><rect x="38.500" y="115.500" width="22" height="24" fill="#f8cc38" stroke="#b07820" stroke-width="1.600"/><rect x="44" y="116" width="11.500" height="4.500" fill="#f4f4f4" stroke="#606060" stroke-width="1.200"/><rect x="45.800" y="127.500" width="17.800" height="13.500" fill="#fff" stroke="#40485c" stroke-width="1.600"/><rect x="46.500" y="128.200" width="16.400" height="5" fill="#2c54ac"/><path d="M196 115L203 124H198.200V132.500H203L196 141.700L189 132.500H193.800V124H189z" fill="#1c3c9c"/><rect x="204.2" y="115" width="2.0" height="26.5" fill="#000"/><rect x="202.6" y="115.6" width="5.200" height="1.800" fill="#000"/><rect x="202.6" y="121.0" width="5.200" height="1.800" fill="#000"/><rect x="202.6" y="126.3" width="5.200" height="1.800" fill="#000"/><rect x="202.6" y="131.7" width="5.200" height="1.800" fill="#000"/><rect x="202.6" y="137.1" width="5.200" height="1.800" fill="#000"/><rect x="205.2" y="137.9" width="10.800000000000011" height="2" fill="#000"/><path d="M214.500 136L218.500 138.600L214.500 141.200z" fill="#000"/><path d="M209 126.500L213 122.500L217.500 119" stroke="#e81c1c" stroke-width="2"/><rect x="397.200" y="117.200" width="20.500" height="16" fill="#1c3088"/><rect x="404.800" y="123" width="19.600" height="16" fill="#dcdcdc" stroke="#000" stroke-width="1.700"/><path d="M408 133L411 128.500L414 132L417 128.500L420.500 128.500" stroke="#e81c1c" stroke-width="2"/><rect x="512.0" y="115" width="2.0" height="27" fill="#000"/><rect x="510.4" y="115.6" width="5.200" height="1.800" fill="#000"/><rect x="510.4" y="121.1" width="5.200" height="1.800" fill="#000"/><rect x="510.4" y="126.6" width="5.200" height="1.800" fill="#000"/><rect x="510.4" y="132.1" width="5.200" height="1.800" fill="#000"/><rect x="510.4" y="137.6" width="5.200" height="1.800" fill="#000"/><rect x="513" y="138.4" width="25.5" height="2" fill="#000"/><rect x="517.0" y="137.500" width="1.500" height="4.500" fill="#000"/><rect x="521.3" y="137.500" width="1.500" height="4.500" fill="#000"/><rect x="525.6" y="137.500" width="1.500" height="4.500" fill="#000"/><rect x="529.9" y="137.500" width="1.500" height="4.500" fill="#000"/><rect x="534.2" y="137.500" width="1.500" height="4.500" fill="#000"/><rect x="522" y="115" width="2.600" height="19" fill="#404040"/><rect x="530.500" y="115" width="2.600" height="19" fill="#404040"/><path d="M517 128L520.500 121L524 127L527 119.500L531 128.500L534 124L537.500 118" stroke="#e81c1c" stroke-width="2"/><path d="M644.500 135.500L651.500 141" stroke="#7a4414" stroke-width="3"/><circle cx="636" cy="127.300" r="10.600" fill="#fff" stroke="#20204c" stroke-width="2.600"/><path d="M630 127.300H642M636 121.300V133.300" stroke="#101010" stroke-width="3"/><path d="M788 127.500L795 121V134z" fill="#1c2c9c"/><path d="M816 127.500L809 121V134z" fill="#1c2c9c"/><path d="M795 131H798.500L801 127H804.500L808 123.500" stroke="#e81c1c" stroke-width="2"/></svg></body></html>
